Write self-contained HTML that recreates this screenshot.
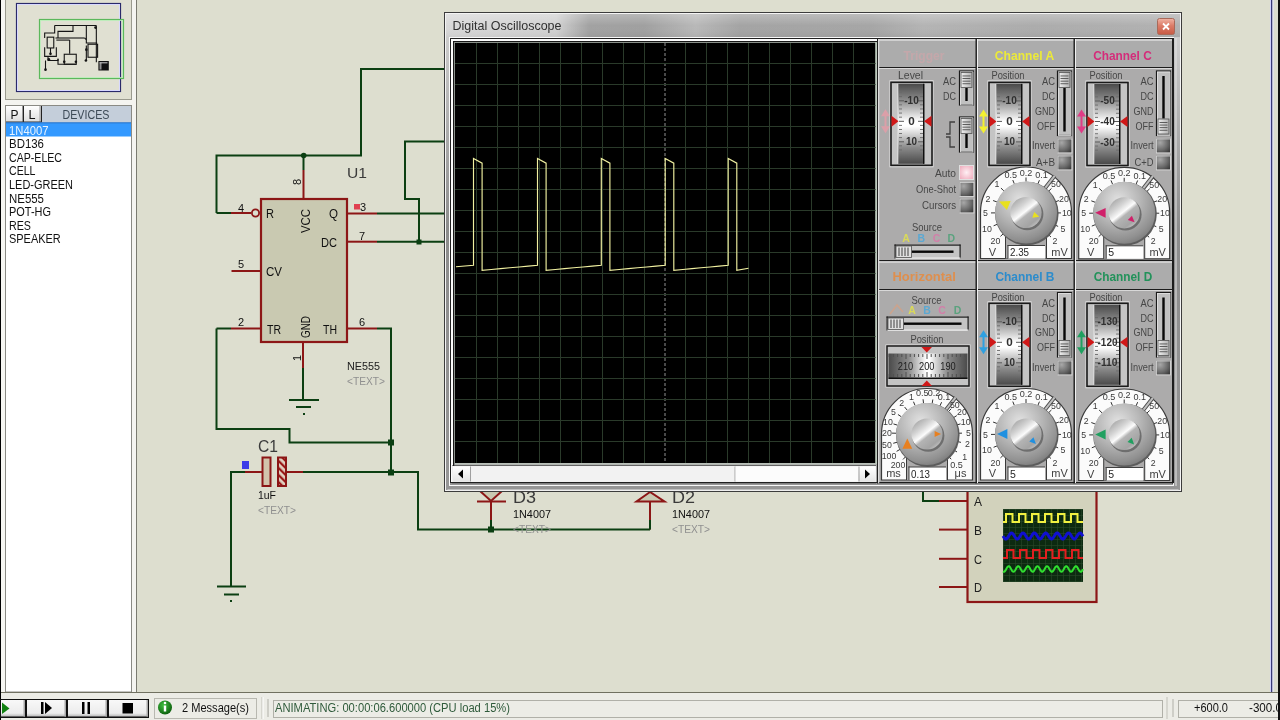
<!DOCTYPE html>
<html><head><meta charset="utf-8"><title>Proteus</title>
<style>html,body{margin:0;padding:0;overflow:hidden;background:#dddecf;}
svg{display:block;} text{font-family:"Liberation Sans", sans-serif;}</style></head>
<body><svg width="1280" height="720" viewBox="0 0 1280 720"><g style="filter:blur(0)">
<defs><linearGradient id="tbv" x1="0" y1="0" x2="0" y2="1"><stop offset="0" stop-color="#fff" stop-opacity="0.25"/><stop offset="0.5" stop-color="#fff" stop-opacity="0"/><stop offset="1" stop-color="#000" stop-opacity="0.05"/></linearGradient></defs>
<rect x="0" y="0" width="1280" height="720" fill="#dddecf" />
<rect x="0" y="0" width="137" height="692" fill="#e4e4d8" />
<rect x="0" y="0" width="1" height="720" fill="#000" />
<rect x="1" y="0" width="4" height="720" fill="#f6f6f2" />
<rect x="5.5" y="-1" width="126" height="100.5" fill="#e0e0d2" stroke="#9a9a8e" stroke-width="1" />
<rect x="132" y="0" width="4" height="692" fill="#f4f4f0" />
<rect x="136" y="0" width="1" height="692" fill="#7a7a70" />
<rect x="5" y="100" width="127" height="5" fill="#f4f4f0" />
<rect x="16.5" y="3.5" width="104" height="88" fill="none" stroke="#2a2a6a" stroke-width="1.2" />
<rect x="17.5" y="4.5" width="102" height="86" fill="none" stroke="#d8d8ff" stroke-width="1" />
<rect x="39.5" y="19.5" width="84" height="59" fill="none" stroke="#5cb85c" stroke-width="1.2" />
<rect x="40.5" y="20.5" width="82" height="57" fill="none" stroke="#b8f0b8" stroke-width="0.8" />
<polyline points="54.66666666666667,25.5 96.33333333333334,25.5" stroke="#141414" stroke-width="1.1" fill="none" />
<polyline points="54.66666666666667,25.5 54.66666666666667,33.0 44.666666666666664,33.0 44.666666666666664,38.0" stroke="#141414" stroke-width="1.1" fill="none" />
<polyline points="73.0,25.5 73.0,31.333333333333336 58.0,31.333333333333336 58.0,38.0" stroke="#141414" stroke-width="1.1" fill="none" />
<polyline points="55.5,38.0 84.66666666666666,38.0" stroke="#141414" stroke-width="1.1" fill="none" />
<polyline points="86.33333333333334,25.5 86.33333333333334,43.0 97.16666666666666,43.0" stroke="#141414" stroke-width="1.1" fill="none" />
<polyline points="96.33333333333334,25.5 96.33333333333334,62.166666666666664" stroke="#141414" stroke-width="1.1" fill="none" />
<polyline points="86.33333333333334,45.5 86.33333333333334,60.5" stroke="#141414" stroke-width="1.1" fill="none" />
<polyline points="69.66666666666667,40.08333333333333 69.66666666666667,53.833333333333336" stroke="#141414" stroke-width="1.1" fill="none" />
<polyline points="56.33333333333333,40.08333333333333 69.66666666666667,40.08333333333333" stroke="#141414" stroke-width="1.1" fill="none" />
<polyline points="58.0,58.833333333333336 58.0,64.25 76.33333333333334,64.25" stroke="#141414" stroke-width="1.1" fill="none" />
<polyline points="44.666666666666664,47.16666666666667 44.666666666666664,56.333333333333336 56.33333333333333,56.333333333333336 56.33333333333333,47.16666666666667" stroke="#141414" stroke-width="1.1" fill="none" />
<polyline points="48.0,56.333333333333336 48.0,60.5 58.0,60.5 58.0,58.833333333333336" stroke="#141414" stroke-width="1.1" fill="none" />
<polyline points="45.5,60.5 45.5,69.66666666666666" stroke="#141414" stroke-width="1.1" fill="none" />
<polyline points="84.66666666666666,38.0 86.33333333333334,39.66666666666667" stroke="#141414" stroke-width="1.1" fill="none" />
<polyline points="50.5,48.0 50.5,53.833333333333336" stroke="#141414" stroke-width="1.1" fill="none" />
<rect x="47.166666666666664" y="37.16666666666667" width="6.6" height="10.8" fill="none" stroke="#141414" stroke-width="1.1" />
<rect x="88.0" y="44.25" width="9.6" height="13" fill="none" stroke="#141414" stroke-width="1.1" />
<rect x="64.25" y="54.25" width="12" height="10" fill="none" stroke="#141414" stroke-width="1.1" />
<circle cx="45.5" cy="69.66666666666666" r="1.3" fill="#141414"/>
<circle cx="85.91666666666666" cy="60.5" r="1.3" fill="#141414"/>
<circle cx="64.25" cy="61.75" r="1.3" fill="#141414"/>
<circle cx="75.91666666666666" cy="61.75" r="1.3" fill="#141414"/>
<circle cx="95.5" cy="27.583333333333336" r="1.3" fill="#141414"/>
<circle cx="50.5" cy="53.833333333333336" r="1.3" fill="#141414"/>
<circle cx="48.833333333333336" cy="59.25" r="1.3" fill="#141414"/>
<circle cx="86.33333333333334" cy="49.66666666666667" r="1.3" fill="#141414"/>
<rect x="98.4" y="61" width="10.4" height="9.5" fill="#101010" />
<rect x="99.5" y="62.5" width="2" height="7" fill="#909090" />
<rect x="99.5" y="62.3" width="8" height="1" fill="#d0d0d0" />
<rect x="5.5" y="105.5" width="126" height="586.5" fill="#ffffff" stroke="#8a8a84" stroke-width="1" />
<rect x="42" y="106" width="89" height="16" fill="#c4ceda" />
<linearGradient id="btn6" x1="0" y1="0" x2="0" y2="1"><stop offset="0" stop-color="#ffffff"/><stop offset="1" stop-color="#dcdcdc"/></linearGradient>
<rect x="6" y="106" width="17" height="16" fill="url(#btn6)" />
<rect x="22" y="106" width="1.2" height="16" fill="#9a9a9a" />
<linearGradient id="btn23" x1="0" y1="0" x2="0" y2="1"><stop offset="0" stop-color="#ffffff"/><stop offset="1" stop-color="#dcdcdc"/></linearGradient>
<rect x="23.5" y="106" width="17" height="16" fill="url(#btn23)" />
<rect x="39.5" y="106" width="1.2" height="16" fill="#9a9a9a" />
<rect x="23" y="106" width="1" height="16" fill="#222" />
<rect x="41" y="106" width="1" height="16" fill="#222" />
<rect x="6" y="121.5" width="36" height="1.2" fill="#333" />
<text x="10.5" y="119" font-size="13" fill="#111" text-anchor="start" font-weight="normal" textLength="8" lengthAdjust="spacingAndGlyphs" >P</text>
<text x="28.5" y="119" font-size="13" fill="#111" text-anchor="start" font-weight="normal" textLength="7" lengthAdjust="spacingAndGlyphs" >L</text>
<text x="62.5" y="118.5" font-size="12" fill="#3c4a56" text-anchor="start" font-weight="normal" textLength="47" lengthAdjust="spacingAndGlyphs" >DEVICES</text>
<rect x="6" y="122.5" width="125" height="14" fill="#3399ff" />
<rect x="6" y="122.3" width="125" height="1" fill="#2a70c0" />
<text x="9" y="134.5" font-size="12" fill="#e8f4ff" text-anchor="start" font-weight="normal" textLength="39.5" lengthAdjust="spacingAndGlyphs" >1N4007</text>
<text x="9" y="148.1" font-size="12" fill="#111" text-anchor="start" font-weight="normal" textLength="35" lengthAdjust="spacingAndGlyphs" >BD136</text>
<text x="9" y="161.7" font-size="12" fill="#111" text-anchor="start" font-weight="normal" textLength="53" lengthAdjust="spacingAndGlyphs" >CAP-ELEC</text>
<text x="9" y="175.3" font-size="12" fill="#111" text-anchor="start" font-weight="normal" textLength="26.5" lengthAdjust="spacingAndGlyphs" >CELL</text>
<text x="9" y="188.9" font-size="12" fill="#111" text-anchor="start" font-weight="normal" textLength="64" lengthAdjust="spacingAndGlyphs" >LED-GREEN</text>
<text x="9" y="202.5" font-size="12" fill="#111" text-anchor="start" font-weight="normal" textLength="35" lengthAdjust="spacingAndGlyphs" >NE555</text>
<text x="9" y="216.1" font-size="12" fill="#111" text-anchor="start" font-weight="normal" textLength="42" lengthAdjust="spacingAndGlyphs" >POT-HG</text>
<text x="9" y="229.7" font-size="12" fill="#111" text-anchor="start" font-weight="normal" textLength="22" lengthAdjust="spacingAndGlyphs" >RES</text>
<text x="9" y="243.3" font-size="12" fill="#111" text-anchor="start" font-weight="normal" textLength="51.7" lengthAdjust="spacingAndGlyphs" >SPEAKER</text>
<rect x="0" y="692" width="1280" height="28" fill="#ecece6" />
<rect x="0" y="692" width="1280" height="1" fill="#707060" />
<rect x="0" y="0" width="1" height="720" fill="#000" />
<rect x="0" y="699" width="149" height="19" fill="#101010" />
<linearGradient id="pb0" x1="0" y1="0" x2="0" y2="1"><stop offset="0" stop-color="#f8f8f8"/><stop offset="0.8" stop-color="#ececec"/><stop offset="1" stop-color="#b8b8b8"/></linearGradient>
<rect x="1" y="700" width="24" height="16.5" fill="url(#pb0)" />
<rect x="23.5" y="700" width="1.5" height="16.5" fill="#a8a8a8" />
<linearGradient id="pb26" x1="0" y1="0" x2="0" y2="1"><stop offset="0" stop-color="#f8f8f8"/><stop offset="0.8" stop-color="#ececec"/><stop offset="1" stop-color="#b8b8b8"/></linearGradient>
<rect x="27" y="700" width="39" height="16.5" fill="url(#pb26)" />
<rect x="64.5" y="700" width="1.5" height="16.5" fill="#a8a8a8" />
<linearGradient id="pb67" x1="0" y1="0" x2="0" y2="1"><stop offset="0" stop-color="#f8f8f8"/><stop offset="0.8" stop-color="#ececec"/><stop offset="1" stop-color="#b8b8b8"/></linearGradient>
<rect x="68" y="700" width="39" height="16.5" fill="url(#pb67)" />
<rect x="105.5" y="700" width="1.5" height="16.5" fill="#a8a8a8" />
<linearGradient id="pb108" x1="0" y1="0" x2="0" y2="1"><stop offset="0" stop-color="#f8f8f8"/><stop offset="0.8" stop-color="#ececec"/><stop offset="1" stop-color="#b8b8b8"/></linearGradient>
<rect x="109" y="700" width="39" height="16.5" fill="url(#pb108)" />
<rect x="146.5" y="700" width="1.5" height="16.5" fill="#a8a8a8" />
<polygon points="2,702.5 9.5,708.5 2,714" fill="#108010"/>
<rect x="41" y="702" width="2.5" height="12" fill="#000" />
<polygon points="45,702 52,708 45,714" fill="#000"/>
<rect x="82" y="702" width="2.5" height="12" fill="#000" />
<rect x="87.5" y="702" width="2.5" height="12" fill="#000" />
<rect x="122.5" y="703" width="10.5" height="10.5" fill="#000" />
<rect x="154.5" y="698.5" width="102" height="20" fill="none" stroke="#b8b8b0" stroke-width="1" />
<radialGradient id="info" cx="0.4" cy="0.35" r="0.7"><stop offset="0" stop-color="#40c040"/><stop offset="1" stop-color="#0a5a0a"/></radialGradient>
<circle cx="165" cy="707.5" r="7" fill="url(#info)"/>
<rect x="163.8" y="705.5" width="2.4" height="6" fill="#fff" />
<circle cx="165" cy="703" r="1.3" fill="#fff"/>
<text x="182" y="712" font-size="12" fill="#111" text-anchor="start" font-weight="normal" textLength="67" lengthAdjust="spacingAndGlyphs" >2 Message(s)</text>
<rect x="261.5" y="697" width="1" height="22" fill="#c0c0b8" />
<rect x="262.5" y="697" width="1" height="22" fill="#ffffff" />
<rect x="267.5" y="699" width="1" height="18" fill="#b0b0a8" />
<rect x="273.5" y="700.5" width="889" height="17" fill="none" stroke="#b0b0a8" stroke-width="1" />
<text x="275" y="712" font-size="12" fill="#2e5a3a" text-anchor="start" font-weight="normal" textLength="235" lengthAdjust="spacingAndGlyphs" >ANIMATING: 00:00:06.600000 (CPU load 15%)</text>
<rect x="1166.5" y="697" width="1" height="22" fill="#c0c0b8" />
<rect x="1172.5" y="699" width="1" height="18" fill="#b0b0a8" />
<rect x="1178.5" y="700.5" width="110" height="17" fill="none" stroke="#b0b0a8" stroke-width="1" />
<text x="1194" y="712" font-size="12" fill="#111" text-anchor="start" font-weight="normal" textLength="34" lengthAdjust="spacingAndGlyphs" >+600.0</text>
<text x="1249" y="712" font-size="12" fill="#111" text-anchor="start" font-weight="normal" textLength="33" lengthAdjust="spacingAndGlyphs" >-300.0</text>
<rect x="1278" y="0" width="2" height="720" fill="#101010" />
<rect x="1270" y="0" width="1" height="692" fill="#d0d0f8" />
<rect x="1271" y="0" width="1.5" height="692" fill="#3a3a78" />
<rect x="1272.5" y="0" width="1" height="692" fill="#e8e8ff" />
<polyline points="216.5,213 216.5,155.5 361,155.5 361,69 445,69" stroke="#0b3f12" stroke-width="2" fill="none" />
<polyline points="303.5,155.5 303.5,170" stroke="#0b3f12" stroke-width="2" fill="none" />
<polyline points="445,141.5 405,141.5 405,199 419,199 419,242" stroke="#0b3f12" stroke-width="2" fill="none" />
<polyline points="216.5,213 231,213" stroke="#0b3f12" stroke-width="2" fill="none" />
<polyline points="377,213.5 445,213.5" stroke="#0b3f12" stroke-width="2" fill="none" />
<polyline points="377,241.7 445,241.7" stroke="#0b3f12" stroke-width="2" fill="none" />
<circle cx="303.7" cy="155.5" r="2.8" fill="#0b3f12"/>
<rect x="416.5" y="239.5" width="5" height="5" fill="#0b3f12" />
<rect x="261" y="199" width="86" height="143" fill="#c9c9b1" stroke="#8c1616" stroke-width="2.2" />
<polyline points="303.5,170 303.5,199" stroke="#8c1616" stroke-width="2" fill="none" />
<polyline points="231,213 251,213" stroke="#8c1616" stroke-width="2" fill="none" />
<circle cx="255.5" cy="213" r="3.6" fill="none" stroke="#8c1616" stroke-width="1.8"/>
<polyline points="347,213.5 377,213.5" stroke="#8c1616" stroke-width="2" fill="none" />
<polyline points="347,241.7 377,241.7" stroke="#8c1616" stroke-width="2" fill="none" />
<polyline points="231.5,271 261,271" stroke="#8c1616" stroke-width="2" fill="none" />
<polyline points="231,328.5 261,328.5" stroke="#8c1616" stroke-width="2" fill="none" />
<polyline points="347,328.5 377,328.5" stroke="#8c1616" stroke-width="2" fill="none" />
<polyline points="303,342 303,368" stroke="#8c1616" stroke-width="2" fill="none" />
<rect x="354" y="204" width="6" height="5.5" fill="#e04050" />
<polyline points="216.5,328.5 231,328.5" stroke="#0b3f12" stroke-width="2" fill="none" />
<polyline points="216.5,328.5 216.5,429 289.5,429 289.5,442.5 391,442.5" stroke="#0b3f12" stroke-width="2" fill="none" />
<polyline points="377,328.5 391,328.5 391,472.5" stroke="#0b3f12" stroke-width="2" fill="none" />
<polyline points="303,368 303,400" stroke="#0b3f12" stroke-width="2" fill="none" />
<polyline points="289,400 319,400" stroke="#0b3f12" stroke-width="2" fill="none" />
<polyline points="296,407 311,407" stroke="#0b3f12" stroke-width="2" fill="none" />
<rect x="303" y="413" width="2" height="2" fill="#0b3f12" />
<rect x="388" y="439.5" width="6" height="6" fill="#0b3f12" />
<rect x="388" y="469.5" width="6" height="6" fill="#0b3f12" />
<polyline points="231,586 231,472 245,472" stroke="#0b3f12" stroke-width="2" fill="none" />
<polyline points="245,472 262,472" stroke="#8c1616" stroke-width="2" fill="none" />
<polyline points="286,472 303,472" stroke="#8c1616" stroke-width="2" fill="none" />
<polyline points="303,472 418,472 418,529.5 650,529.5" stroke="#0b3f12" stroke-width="2" fill="none" />
<rect x="262.5" y="457.5" width="8" height="28.5" fill="#d2c4ac" stroke="#8c1616" stroke-width="2" />
<pattern id="hatch" width="5" height="5" patternUnits="userSpaceOnUse" patternTransform="rotate(-45)"><rect width="5" height="5" fill="#e0d0c0"/><rect width="2.2" height="5" fill="#9a1818"/></pattern>
<rect x="278" y="457.5" width="8" height="28.5" fill="url(#hatch)" stroke="#8c1616" stroke-width="2" />
<rect x="242" y="461" width="7" height="8" fill="#3c3ce8" />
<polyline points="217,586.5 246,586.5" stroke="#0b3f12" stroke-width="2" fill="none" />
<polyline points="224,594.5 239,594.5" stroke="#0b3f12" stroke-width="2" fill="none" />
<rect x="230" y="600" width="2" height="2" fill="#0b3f12" />
<polyline points="491,501 491,520" stroke="#8c1616" stroke-width="2" fill="none" />
<polyline points="491,520 491,529.5" stroke="#0b3f12" stroke-width="2" fill="none" />
<polyline points="477,501.5 506,501.5" stroke="#8c1616" stroke-width="2" fill="none" />
<polygon points="480,491 502,491 491,501" fill="#c9c9b1" stroke="#8c1616" stroke-width="2"/>
<rect x="488" y="526.5" width="6" height="6" fill="#0b3f12" />
<polyline points="650,501 650,529.5" stroke="#8c1616" stroke-width="2" fill="none" />
<polygon points="650,492 636.5,501.5 664.5,501.5" fill="#c9c9b1" stroke="#8c1616" stroke-width="2"/>
<polyline points="650,520 650,529.5" stroke="#0b3f12" stroke-width="2" fill="none" />
<polyline points="923,492 923,501 939,501" stroke="#0b3f12" stroke-width="2" fill="none" />
<polyline points="939,501 967,501" stroke="#8c1616" stroke-width="2" fill="none" />
<polyline points="939,529.6 967,529.6" stroke="#8c1616" stroke-width="2" fill="none" />
<polyline points="939,558.8 967,558.8" stroke="#8c1616" stroke-width="2" fill="none" />
<polyline points="939,587 967,587" stroke="#8c1616" stroke-width="2" fill="none" />
<rect x="967.5" y="486" width="129" height="116" fill="#d2d2bc" stroke="#8c1616" stroke-width="2.2" />
<text x="974" y="505.5" font-size="12" fill="#202020" text-anchor="start" font-weight="normal" textLength="8" lengthAdjust="spacingAndGlyphs" >A</text>
<text x="974" y="534.5" font-size="12" fill="#202020" text-anchor="start" font-weight="normal" textLength="8" lengthAdjust="spacingAndGlyphs" >B</text>
<text x="974" y="563.5" font-size="12" fill="#202020" text-anchor="start" font-weight="normal" textLength="8" lengthAdjust="spacingAndGlyphs" >C</text>
<text x="974" y="592" font-size="12" fill="#202020" text-anchor="start" font-weight="normal" textLength="8" lengthAdjust="spacingAndGlyphs" >D</text>
<rect x="1003" y="509" width="80" height="73" fill="#0c2a10" />
<rect x="1003" y="509" width="0.6" height="73" fill="#2a4a2a" />
<rect x="1009" y="509" width="0.6" height="73" fill="#2a4a2a" />
<rect x="1015" y="509" width="0.6" height="73" fill="#2a4a2a" />
<rect x="1021" y="509" width="0.6" height="73" fill="#2a4a2a" />
<rect x="1027" y="509" width="0.6" height="73" fill="#2a4a2a" />
<rect x="1033" y="509" width="0.6" height="73" fill="#2a4a2a" />
<rect x="1039" y="509" width="0.6" height="73" fill="#2a4a2a" />
<rect x="1045" y="509" width="0.6" height="73" fill="#2a4a2a" />
<rect x="1051" y="509" width="0.6" height="73" fill="#2a4a2a" />
<rect x="1057" y="509" width="0.6" height="73" fill="#2a4a2a" />
<rect x="1063" y="509" width="0.6" height="73" fill="#2a4a2a" />
<rect x="1069" y="509" width="0.6" height="73" fill="#2a4a2a" />
<rect x="1075" y="509" width="0.6" height="73" fill="#2a4a2a" />
<rect x="1081" y="509" width="0.6" height="73" fill="#2a4a2a" />
<rect x="1003" y="509" width="80" height="0.6" fill="#2a4a2a" />
<rect x="1003" y="515" width="80" height="0.6" fill="#2a4a2a" />
<rect x="1003" y="521" width="80" height="0.6" fill="#2a4a2a" />
<rect x="1003" y="527" width="80" height="0.6" fill="#2a4a2a" />
<rect x="1003" y="533" width="80" height="0.6" fill="#2a4a2a" />
<rect x="1003" y="539" width="80" height="0.6" fill="#2a4a2a" />
<rect x="1003" y="545" width="80" height="0.6" fill="#2a4a2a" />
<rect x="1003" y="551" width="80" height="0.6" fill="#2a4a2a" />
<rect x="1003" y="557" width="80" height="0.6" fill="#2a4a2a" />
<rect x="1003" y="563" width="80" height="0.6" fill="#2a4a2a" />
<rect x="1003" y="569" width="80" height="0.6" fill="#2a4a2a" />
<rect x="1003" y="575" width="80" height="0.6" fill="#2a4a2a" />
<rect x="1003" y="581" width="80" height="0.6" fill="#2a4a2a" />
<polyline points="1003,522 1006,522 1006,514 1012.5,514 1012.5,522 1019,522 1019,514 1025.5,514 1025.5,522 1032,522 1032,514 1038.5,514 1038.5,522 1045,522 1045,514 1051.5,514 1051.5,522 1058,522 1058,514 1064.5,514 1064.5,522 1071,522 1071,514 1077.5,514 1077.5,522 1083,522" stroke="#f0f040" stroke-width="2" fill="none" />
<polyline points="1003,558 1007,558 1007,550 1013.5,550 1013.5,558 1020,558 1020,550 1026.5,550 1026.5,558 1033,558 1033,550 1039.5,550 1039.5,558 1046,558 1046,550 1052.5,550 1052.5,558 1059,558 1059,550 1065.5,550 1065.5,558 1072,558 1072,550 1078.5,550 1078.5,558 1083,558" stroke="#e02020" stroke-width="2" fill="none" />
<polyline points="1003.0,536.0 1003.5,536.816310394536 1004.0,537.5710187419636 1004.5,538.2071717320194 1005.0,538.6767627158551 1005.5,538.9443544797573 1006.0,538.98975347902 1006.5,538.8095337235911 1007.0,538.417295316983 1007.5,537.842638138069 1008.0,537.1289281158435 1008.5,536.3300246629823 1009.0,535.5062162291578 1009.5,534.7196706935108 1010.0,534.0297439278568 1010.5,533.4885005652125 1011.0,533.1367849943615 1011.5,533.0011390789251 1012.0,533.091799202182 1012.5,533.4019237886466 1013.0,533.908109596718 1013.5,534.5721578208888 1014.0,535.3439567263808 1014.5,536.1652632810676 1015.0,536.9740984076141 1015.5,537.7094241725308 1016.0,538.315749952749 1016.5,538.7473199799651 1017.0,538.9715662539126 1017.5,538.9715662539126 1018.0,538.7473199799651 1018.5,538.315749952749 1019.0,537.7094241725308 1019.5,536.9740984076141 1020.0,536.1652632810676 1020.5,535.3439567263808 1021.0,534.5721578208888 1021.5,533.908109596718 1022.0,533.4019237886467 1022.5,533.091799202182 1023.0,533.0011390789251 1023.5,533.1367849943615 1024.0,533.4885005652125 1024.5,534.0297439278568 1025.0,534.7196706935108 1025.5,535.5062162291578 1026.0,536.3300246629823 1026.5,537.1289281158435 1027.0,537.842638138069 1027.5,538.417295316983 1028.0,538.8095337235911 1028.5,538.98975347902 1029.0,538.9443544797573 1029.5,538.6767627158551 1030.0,538.2071717320194 1030.5,537.5710187419636 1031.0,536.816310394536 1031.5,536.0 1032.0,535.183689605464 1032.5,534.4289812580364 1033.0,533.7928282679807 1033.5,533.3232372841449 1034.0,533.0556455202427 1034.5,533.01024652098 1035.0,533.1904662764089 1035.5,533.582704683017 1036.0,534.157361861931 1036.5,534.8710718841564 1037.0,535.6699753370177 1037.5,536.4937837708422 1038.0,537.2803293064892 1038.5,537.9702560721432 1039.0,538.5114994347875 1039.5,538.8632150056385 1040.0,538.9988609210749 1040.5,538.908200797818 1041.0,538.5980762113534 1041.5,538.091890403282 1042.0,537.4278421791112 1042.5,536.6560432736192 1043.0,535.8347367189324 1043.5,535.0259015923859 1044.0,534.2905758274692 1044.5,533.684250047251 1045.0,533.2526800200349 1045.5,533.0284337460874 1046.0,533.0284337460874 1046.5,533.2526800200349 1047.0,533.684250047251 1047.5,534.2905758274692 1048.0,535.0259015923859 1048.5,535.8347367189324 1049.0,536.6560432736192 1049.5,537.4278421791112 1050.0,538.091890403282 1050.5,538.5980762113534 1051.0,538.908200797818 1051.5,538.9988609210749 1052.0,538.8632150056385 1052.5,538.5114994347875 1053.0,537.9702560721432 1053.5,537.2803293064892 1054.0,536.4937837708422 1054.5,535.6699753370177 1055.0,534.8710718841565 1055.5,534.157361861931 1056.0,533.582704683017 1056.5,533.1904662764089 1057.0,533.01024652098 1057.5,533.0556455202427 1058.0,533.3232372841449 1058.5,533.7928282679806 1059.0,534.4289812580364 1059.5,535.183689605464 1060.0,536.0 1060.5,536.816310394536 1061.0,537.5710187419636 1061.5,538.2071717320194 1062.0,538.6767627158551 1062.5,538.9443544797573 1063.0,538.98975347902 1063.5,538.8095337235911 1064.0,538.417295316983 1064.5,537.842638138069 1065.0,537.1289281158436 1065.5,536.3300246629823 1066.0,535.5062162291578 1066.5,534.7196706935108 1067.0,534.0297439278568 1067.5,533.4885005652125 1068.0,533.1367849943615 1068.5,533.0011390789251 1069.0,533.091799202182 1069.5,533.4019237886466 1070.0,533.908109596718 1070.5,534.5721578208887 1071.0,535.3439567263808 1071.5,536.1652632810676 1072.0,536.9740984076141 1072.5,537.7094241725308 1073.0,538.315749952749 1073.5,538.7473199799651 1074.0,538.9715662539126 1074.5,538.9715662539126 1075.0,538.7473199799651 1075.5,538.315749952749 1076.0,537.7094241725308 1076.5,536.9740984076141 1077.0,536.1652632810676 1077.5,535.3439567263808 1078.0,534.5721578208888 1078.5,533.9081095967181 1079.0,533.4019237886467 1079.5,533.091799202182 1080.0,533.0011390789251 1080.5,533.1367849943615 1081.0,533.4885005652125 1081.5,534.0297439278568 1082.0,534.7196706935108 1082.5,535.5062162291578 1083.0,536.3300246629823" stroke="#1010d0" stroke-width="3" fill="none" />
<polyline points="1003.0,571.3561187574621 1003.5,571.7173683961504 1004.0,571.790197257043 1004.5,571.5668753037069 1005.0,571.0711058704309 1005.5,570.3555097964635 1006.0,569.4960402637632 1006.5,568.5839211459368 1007.0,567.7159645299201 1007.5,566.9842951061453 1008.0,566.4665720777563 1008.5,566.2177464329011 1009.0,566.2642284610814 1009.5,566.6010845718646 1010.0,567.1925609448944 1010.5,567.975878431124 1011.0,568.8678959154367 1011.5,569.7739348930713 1012.0,570.5978286215968 1012.5,571.2521292340481 1013.0,571.6673894328769 1013.5,571.799533608128 1014.0,571.634536011264 1014.5,571.1899094444835 1015.0,570.5128464564308 1015.5,569.6752103373049 1016.0,568.7659075678503 1016.5,567.8814513085164 1017.0,567.1157175176033 1017.5,566.5499809813613 1018.0,566.2442888292265 1018.5,566.2310871470555 1019.0,566.5117771579746 1019.5,567.0565664969209 1020.0,567.8076313645539 1020.5,568.6852539303412 1021.0,569.596283562446 1021.5,570.4440238116644 1022.0,571.1384957475008 1022.5,571.6059882985468 1023.0,571.7968819265107 1023.5,571.6909152311596 1024.0,571.299335490094 1024.5,570.6637048756152 1025.0,569.8514890565219 1025.5,568.9488964094967 1026.0,568.0517278843322 1026.5,567.2552087159314 1027.0,566.6438812425379 1027.5,566.2826316038496 1028.0,566.209802742957 1028.5,566.4331246962931 1029.0,566.9288941295691 1029.5,567.6444902035365 1030.0,568.5039597362368 1030.5,569.4160788540632 1031.0,570.2840354700799 1031.5,571.0157048938547 1032.0,571.5334279222437 1032.5,571.7822535670989 1033.0,571.7357715389186 1033.5,571.3989154281354 1034.0,570.8074390551056 1034.5,570.024121568876 1035.0,569.1321040845633 1035.5,568.2260651069287 1036.0,567.4021713784032 1036.5,566.7478707659519 1037.0,566.3326105671231 1037.5,566.200466391872 1038.0,566.365463988736 1038.5,566.8100905555164 1039.0,567.4871535435692 1039.5,568.3247896626951 1040.0,569.2340924321497 1040.5,570.1185486914836 1041.0,570.8842824823967 1041.5,571.4500190186387 1042.0,571.7557111707735 1042.5,571.7689128529445 1043.0,571.4882228420254 1043.5,570.9434335030791 1044.0,570.1923686354461 1044.5,569.3147460696588 1045.0,568.403716437554 1045.5,567.5559761883356 1046.0,566.8615042524992 1046.5,566.3940117014532 1047.0,566.2031180734893 1047.5,566.3090847688404 1048.0,566.700664509906 1048.5,567.3362951243848 1049.0,568.1485109434781 1049.5,569.0511035905033 1050.0,569.9482721156678 1050.5,570.7447912840686 1051.0,571.3561187574621 1051.5,571.7173683961504 1052.0,571.790197257043 1052.5,571.5668753037069 1053.0,571.0711058704309 1053.5,570.3555097964635 1054.0,569.4960402637632 1054.5,568.5839211459368 1055.0,567.7159645299201 1055.5,566.9842951061453 1056.0,566.4665720777563 1056.5,566.2177464329011 1057.0,566.2642284610814 1057.5,566.6010845718646 1058.0,567.1925609448944 1058.5,567.975878431124 1059.0,568.8678959154367 1059.5,569.7739348930713 1060.0,570.5978286215968 1060.5,571.2521292340481 1061.0,571.6673894328769 1061.5,571.799533608128 1062.0,571.634536011264 1062.5,571.1899094444835 1063.0,570.5128464564308 1063.5,569.6752103373049 1064.0,568.7659075678503 1064.5,567.8814513085164 1065.0,567.1157175176033 1065.5,566.5499809813613 1066.0,566.2442888292265 1066.5,566.2310871470555 1067.0,566.5117771579746 1067.5,567.0565664969209 1068.0,567.8076313645539 1068.5,568.6852539303412 1069.0,569.596283562446 1069.5,570.4440238116645 1070.0,571.1384957475008 1070.5,571.6059882985468 1071.0,571.7968819265107 1071.5,571.6909152311596 1072.0,571.299335490094 1072.5,570.6637048756152 1073.0,569.8514890565219 1073.5,568.9488964094967 1074.0,568.0517278843322 1074.5,567.2552087159314 1075.0,566.6438812425379 1075.5,566.2826316038496 1076.0,566.209802742957 1076.5,566.4331246962931 1077.0,566.9288941295691 1077.5,567.6444902035365 1078.0,568.5039597362368 1078.5,569.4160788540632 1079.0,570.2840354700799 1079.5,571.0157048938547 1080.0,571.5334279222437 1080.5,571.7822535670989 1081.0,571.7357715389186 1081.5,571.3989154281354 1082.0,570.8074390551056 1082.5,570.024121568876 1083.0,569.1321040845633" stroke="#30e030" stroke-width="2" fill="none" />
<text x="347" y="178" font-size="15" fill="#3a3a3a" text-anchor="start" font-weight="normal" textLength="20" lengthAdjust="spacingAndGlyphs" >U1</text>
<text x="238" y="212" font-size="11" fill="#111" text-anchor="start" font-weight="normal" >4</text>
<text x="238" y="268" font-size="11" fill="#111" text-anchor="start" font-weight="normal" >5</text>
<text x="238" y="326" font-size="11" fill="#111" text-anchor="start" font-weight="normal" >2</text>
<text x="360" y="211" font-size="11" fill="#111" text-anchor="start" font-weight="normal" >3</text>
<text x="359" y="240" font-size="11" fill="#111" text-anchor="start" font-weight="normal" >7</text>
<text x="359" y="326" font-size="11" fill="#111" text-anchor="start" font-weight="normal" >6</text>
<text x="301" y="185" font-size="11" fill="#111" text-anchor="start" font-weight="normal" transform="rotate(-90 301 185)" text-anchor="middle">8</text>
<text x="301" y="361" font-size="11" fill="#111" text-anchor="start" font-weight="normal" transform="rotate(-90 301 361)">1</text>
<text x="266" y="218" font-size="12" fill="#111" text-anchor="start" font-weight="normal" textLength="8" lengthAdjust="spacingAndGlyphs" >R</text>
<text x="329" y="218" font-size="12" fill="#111" text-anchor="start" font-weight="normal" textLength="9" lengthAdjust="spacingAndGlyphs" >Q</text>
<text x="321" y="247" font-size="12" fill="#111" text-anchor="start" font-weight="normal" textLength="16" lengthAdjust="spacingAndGlyphs" >DC</text>
<text x="266" y="276" font-size="12" fill="#111" text-anchor="start" font-weight="normal" textLength="16" lengthAdjust="spacingAndGlyphs" >CV</text>
<text x="267" y="334" font-size="12" fill="#111" text-anchor="start" font-weight="normal" textLength="14" lengthAdjust="spacingAndGlyphs" >TR</text>
<text x="323" y="334" font-size="12" fill="#111" text-anchor="start" font-weight="normal" textLength="14" lengthAdjust="spacingAndGlyphs" >TH</text>
<text x="0" y="0" font-size="12" fill="#111" textLength="24" lengthAdjust="spacingAndGlyphs" transform="translate(309.5 233) rotate(-90)">VCC</text>
<text x="0" y="0" font-size="12" fill="#111" textLength="22" lengthAdjust="spacingAndGlyphs" transform="translate(309.5 338) rotate(-90)">GND</text>
<text x="347" y="370" font-size="11" fill="#202020" text-anchor="start" font-weight="normal" textLength="33" lengthAdjust="spacingAndGlyphs" >NE555</text>
<text x="347" y="385" font-size="11" fill="#909090" text-anchor="start" font-weight="normal" textLength="38" lengthAdjust="spacingAndGlyphs" >&lt;TEXT&gt;</text>
<text x="258" y="452" font-size="16" fill="#3a3a3a" text-anchor="start" font-weight="normal" textLength="20" lengthAdjust="spacingAndGlyphs" >C1</text>
<text x="258" y="499" font-size="11" fill="#111" text-anchor="start" font-weight="normal" textLength="18" lengthAdjust="spacingAndGlyphs" >1uF</text>
<text x="258" y="514" font-size="11" fill="#909090" text-anchor="start" font-weight="normal" textLength="38" lengthAdjust="spacingAndGlyphs" >&lt;TEXT&gt;</text>
<text x="513" y="503" font-size="16" fill="#3a3a3a" text-anchor="start" font-weight="normal" textLength="23" lengthAdjust="spacingAndGlyphs" >D3</text>
<text x="513" y="518" font-size="11" fill="#111" text-anchor="start" font-weight="normal" textLength="38" lengthAdjust="spacingAndGlyphs" >1N4007</text>
<text x="513" y="533" font-size="11" fill="#909090" text-anchor="start" font-weight="normal" textLength="38" lengthAdjust="spacingAndGlyphs" >&lt;TEXT&gt;</text>
<text x="672" y="503" font-size="16" fill="#3a3a3a" text-anchor="start" font-weight="normal" textLength="23" lengthAdjust="spacingAndGlyphs" >D2</text>
<text x="672" y="518" font-size="11" fill="#111" text-anchor="start" font-weight="normal" textLength="38" lengthAdjust="spacingAndGlyphs" >1N4007</text>
<text x="672" y="533" font-size="11" fill="#909090" text-anchor="start" font-weight="normal" textLength="38" lengthAdjust="spacingAndGlyphs" >&lt;TEXT&gt;</text>
<linearGradient id="wfg" x1="0" y1="0" x2="0" y2="1"><stop offset="0" stop-color="#d4d4d4"/><stop offset="0.08" stop-color="#c8c8c8"/><stop offset="0.45" stop-color="#8c8c8c"/><stop offset="1" stop-color="#969696"/></linearGradient>
<rect x="444" y="12" width="738" height="480" fill="url(#wfg)" />
<rect x="444.5" y="12.5" width="737" height="479" fill="none" stroke="#3c3c3c" stroke-width="1" />
<rect x="445.5" y="13.5" width="735" height="477" fill="none" stroke="#f4f4f4" stroke-width="1" />
<linearGradient id="tb" x1="0" y1="0" x2="1" y2="0"><stop offset="0" stop-color="#d8d8d8"/><stop offset="0.15" stop-color="#d2d2d2"/><stop offset="0.195" stop-color="#a2a2a2"/><stop offset="0.27" stop-color="#a0a0a0"/><stop offset="0.34" stop-color="#b8b8b8"/><stop offset="0.40" stop-color="#a4a4a4"/><stop offset="0.58" stop-color="#a6a6a6"/><stop offset="0.65" stop-color="#b4b4b4"/><stop offset="0.80" stop-color="#acacac"/><stop offset="1" stop-color="#b2b2b2"/></linearGradient>
<rect x="446" y="14" width="734" height="23" fill="url(#tb)" />
<rect x="446" y="14" width="734" height="23" fill="url(#tbv)" />
<text x="452.5" y="30" font-size="12.5" fill="#303030" text-anchor="start" font-weight="normal" textLength="109" lengthAdjust="spacingAndGlyphs" >Digital Oscilloscope</text>
<linearGradient id="cb" x1="0" y1="0" x2="0" y2="1"><stop offset="0" stop-color="#f0b4a4"/><stop offset="0.45" stop-color="#dc7c68"/><stop offset="1" stop-color="#c85a44"/></linearGradient>
<rect x="1157.5" y="18.5" width="17" height="16" fill="url(#cb)" stroke="#a86a5a" stroke-width="1" rx="2"/>
<path d="M1163,23.5 L1169,29.5 M1169,23.5 L1163,29.5" stroke="#fff" stroke-width="1.8"/>
<rect x="449.5" y="37.5" width="724" height="448" fill="none" stroke="#f8f8f8" stroke-width="1" />
<rect x="450.5" y="38.5" width="723" height="444" fill="#a8a8a8" stroke="#202020" stroke-width="1" />
<rect x="447.5" y="489.5" width="731" height="1" fill="#e8e8e8" />
<rect x="1175.5" y="38" width="1" height="448" fill="#e4e4e4" />
<rect x="451" y="39" width="426" height="443" fill="#a8a8a8" />
<rect x="451" y="39" width="2" height="443" fill="#fcfcfc" />
<rect x="451" y="39" width="426" height="2" fill="#fcfcfc" />
<rect x="453" y="41" width="424" height="1.2" fill="#181818" />
<rect x="453" y="41" width="1.2" height="441" fill="#181818" />
<rect x="454" y="42" width="1" height="422" fill="#8a908a" />
<rect x="454" y="42" width="422" height="1" fill="#8a908a" />
<rect x="455" y="43" width="420.5" height="420" fill="#000" />
<rect x="875.5" y="42" width="1" height="422" fill="#d8f0d8" />
<rect x="455" y="463" width="421" height="1.5" fill="#b8c0b8" />
<rect x="877" y="38.5" width="1.2" height="445" fill="#202020" />
<rect x="476" y="43" width="1" height="420" fill="#2a3a2a" />
<rect x="497" y="43" width="1" height="420" fill="#2a3a2a" />
<rect x="518" y="43" width="1" height="420" fill="#2a3a2a" />
<rect x="539" y="43" width="1" height="420" fill="#2a3a2a" />
<rect x="560" y="43" width="1" height="420" fill="#2a3a2a" />
<rect x="581" y="43" width="1" height="420" fill="#2a3a2a" />
<rect x="602" y="43" width="1" height="420" fill="#2a3a2a" />
<rect x="623" y="43" width="1" height="420" fill="#2a3a2a" />
<rect x="644" y="43" width="1" height="420" fill="#2a3a2a" />
<line x1="665.00" y1="43" x2="665.00" y2="463" stroke="#909090" stroke-width="1" stroke-dasharray="3,2"/>
<rect x="685" y="43" width="1" height="420" fill="#2a3a2a" />
<rect x="706" y="43" width="1" height="420" fill="#2a3a2a" />
<rect x="727" y="43" width="1" height="420" fill="#2a3a2a" />
<rect x="748" y="43" width="1" height="420" fill="#2a3a2a" />
<rect x="769" y="43" width="1" height="420" fill="#2a3a2a" />
<rect x="790" y="43" width="1" height="420" fill="#2a3a2a" />
<rect x="811" y="43" width="1" height="420" fill="#2a3a2a" />
<rect x="832" y="43" width="1" height="420" fill="#2a3a2a" />
<rect x="853" y="43" width="1" height="420" fill="#2a3a2a" />
<rect x="455" y="63" width="420.5" height="1" fill="#2a3a2a" />
<rect x="455" y="84" width="420.5" height="1" fill="#2a3a2a" />
<rect x="455" y="105" width="420.5" height="1" fill="#2a3a2a" />
<rect x="455" y="126" width="420.5" height="1" fill="#2a3a2a" />
<rect x="455" y="147" width="420.5" height="1" fill="#2a3a2a" />
<rect x="455" y="168" width="420.5" height="1" fill="#2a3a2a" />
<rect x="455" y="189" width="420.5" height="1" fill="#2a3a2a" />
<rect x="455" y="210" width="420.5" height="1" fill="#2a3a2a" />
<rect x="455" y="231" width="420.5" height="1" fill="#2a3a2a" />
<rect x="455" y="252" width="420.5" height="1" fill="#2a3a2a" />
<rect x="455" y="273" width="420.5" height="1" fill="#2a3a2a" />
<rect x="455" y="294" width="420.5" height="1" fill="#2a3a2a" />
<rect x="455" y="315" width="420.5" height="1" fill="#2a3a2a" />
<rect x="455" y="336" width="420.5" height="1" fill="#2a3a2a" />
<rect x="455" y="357" width="420.5" height="1" fill="#2a3a2a" />
<rect x="455" y="378" width="420.5" height="1" fill="#2a3a2a" />
<rect x="455" y="399" width="420.5" height="1" fill="#2a3a2a" />
<rect x="455" y="420" width="420.5" height="1" fill="#2a3a2a" />
<rect x="455" y="441" width="420.5" height="1" fill="#2a3a2a" />
<polyline points="456,266.8 473.5,265.3 473.5,265.3 473.5,158.5 482.1,163.2 482.1,270.3 491.33333333333337,269.4666666666667 500.56666666666666,268.6333333333333 509.8,267.8 519.0333333333333,266.9666666666667 528.2666666666667,266.1333333333333 537.5,265.3 537.5,265.3 537.5,158.5 546.1,163.2 546.1,270.3 555.3,269.4666666666667 564.5,268.6333333333333 573.7,267.8 582.9,266.9666666666667 592.0999999999999,266.1333333333333 601.3,265.3 601.3,265.3 601.3,158.5 609.9,163.2 609.9,270.3 619.1166666666667,269.4666666666667 628.3333333333334,268.6333333333333 637.55,267.8 646.7666666666667,266.9666666666667 655.9833333333333,266.1333333333333 665.2,265.3 665.2,265.3 665.2,158.5 673.8000000000001,163.2 673.8000000000001,270.3 682.8666666666668,269.4666666666667 691.9333333333334,268.6333333333333 701.0,267.8 710.0666666666667,266.9666666666667 719.1333333333334,266.1333333333333 728.2,265.3 728.2,265.3 728.2,158.5 736.8000000000001,163.2 736.8000000000001,270.3 748.5,268.3" stroke="#f0f0a0" stroke-width="1.15" fill="none" stroke-linejoin="miter"/>
<rect x="452" y="465.5" width="424" height="1" fill="#202020" />
<rect x="452" y="466" width="424" height="16" fill="#f0f0f0" />
<rect x="452" y="482" width="424" height="1.2" fill="#202020" />
<linearGradient id="sbt" x1="0" y1="0" x2="0" y2="1"><stop offset="0" stop-color="#ffffff"/><stop offset="1" stop-color="#e4e4e4"/></linearGradient>
<rect x="453" y="466.5" width="17" height="15" fill="url(#sbt)" />
<rect x="470" y="466.5" width="1" height="15" fill="#a0a0a0" />
<polygon points="458,474 463,469.5 463,478.5" fill="#000"/>
<rect x="471.5" y="466.5" width="263" height="15" fill="#f2f2f2" />
<rect x="734.5" y="466.5" width="1.2" height="15" fill="#a8a8a8" />
<rect x="735.5" y="466.5" width="123" height="15" fill="#fcfcfc" />
<rect x="858.5" y="466.5" width="17" height="15" fill="url(#sbt)" />
<rect x="858.5" y="466.5" width="1" height="15" fill="#a0a0a0" />
<polygon points="870,474 865,469.5 865,478.5" fill="#000"/>
<rect x="879" y="39.5" width="97" height="28" fill="#acacac" />
<rect x="879" y="39.5" width="97" height="1" fill="#f4f4f4" />
<rect x="879" y="67" width="97" height="1.2" fill="#1c1c1c" />
<rect x="879" y="68.2" width="97" height="1" fill="#ececec" />
<rect x="879" y="69" width="97" height="191" fill="#acabab" />
<rect x="879" y="260" width="97" height="1.2" fill="#1c1c1c" />
<rect x="879" y="261.5" width="97" height="28" fill="#acacac" />
<rect x="879" y="261.5" width="97" height="1" fill="#f4f4f4" />
<rect x="879" y="289" width="97" height="1.2" fill="#1c1c1c" />
<rect x="879" y="290.2" width="97" height="1" fill="#ececec" />
<rect x="879" y="291" width="97" height="191" fill="#acabab" />
<rect x="879" y="482" width="97" height="1.2" fill="#1c1c1c" />
<rect x="977" y="39.5" width="97" height="28" fill="#acacac" />
<rect x="977" y="39.5" width="97" height="1" fill="#f4f4f4" />
<rect x="977" y="67" width="97" height="1.2" fill="#1c1c1c" />
<rect x="977" y="68.2" width="97" height="1" fill="#ececec" />
<rect x="977" y="69" width="97" height="191" fill="#acabab" />
<rect x="977" y="260" width="97" height="1.2" fill="#1c1c1c" />
<rect x="977" y="261.5" width="97" height="28" fill="#acacac" />
<rect x="977" y="261.5" width="97" height="1" fill="#f4f4f4" />
<rect x="977" y="289" width="97" height="1.2" fill="#1c1c1c" />
<rect x="977" y="290.2" width="97" height="1" fill="#ececec" />
<rect x="977" y="291" width="97" height="191" fill="#acabab" />
<rect x="977" y="482" width="97" height="1.2" fill="#1c1c1c" />
<rect x="1075" y="39.5" width="98" height="28" fill="#acacac" />
<rect x="1075" y="39.5" width="98" height="1" fill="#f4f4f4" />
<rect x="1075" y="67" width="98" height="1.2" fill="#1c1c1c" />
<rect x="1075" y="68.2" width="98" height="1" fill="#ececec" />
<rect x="1075" y="69" width="98" height="191" fill="#acabab" />
<rect x="1075" y="260" width="98" height="1.2" fill="#1c1c1c" />
<rect x="1075" y="261.5" width="98" height="28" fill="#acacac" />
<rect x="1075" y="261.5" width="98" height="1" fill="#f4f4f4" />
<rect x="1075" y="289" width="98" height="1.2" fill="#1c1c1c" />
<rect x="1075" y="290.2" width="98" height="1" fill="#ececec" />
<rect x="1075" y="291" width="98" height="191" fill="#acabab" />
<rect x="1075" y="482" width="98" height="1.2" fill="#1c1c1c" />
<rect x="975.5" y="38.5" width="1.4" height="445" fill="#1c1c1c" />
<rect x="977" y="39" width="1" height="444" fill="#f0f0f0" />
<rect x="1073.5" y="38.5" width="1.4" height="445" fill="#1c1c1c" />
<rect x="1075" y="39" width="1" height="444" fill="#f0f0f0" />
<rect x="1172" y="38.5" width="1.2" height="445" fill="#1c1c1c" />
<rect x="878.2" y="39" width="1" height="444" fill="#f0f0f0" />
<text x="924" y="60" font-size="13" fill="#e8a0a8" text-anchor="middle" font-weight="bold" textLength="41" lengthAdjust="spacingAndGlyphs" opacity="0.4">Trigger</text>
<text x="1024.5" y="60" font-size="13" fill="#ecea38" text-anchor="middle" font-weight="bold" textLength="59.5" lengthAdjust="spacingAndGlyphs" opacity="1">Channel A</text>
<text x="1122.5" y="60" font-size="13" fill="#d42c7a" text-anchor="middle" font-weight="bold" textLength="58.5" lengthAdjust="spacingAndGlyphs" opacity="1">Channel C</text>
<text x="924.2" y="280.5" font-size="13" fill="#e48c44" text-anchor="middle" font-weight="bold" textLength="63.5" lengthAdjust="spacingAndGlyphs" opacity="0.9">Horizontal</text>
<text x="1024.9" y="281" font-size="13" fill="#2c8ccc" text-anchor="middle" font-weight="bold" textLength="59" lengthAdjust="spacingAndGlyphs" opacity="1">Channel B</text>
<text x="1123" y="281" font-size="13" fill="#22925a" text-anchor="middle" font-weight="bold" textLength="58.5" lengthAdjust="spacingAndGlyphs" opacity="1">Channel D</text>
<text x="910.5" y="79" font-size="10.5" fill="#464646" text-anchor="middle" font-weight="normal" textLength="25" lengthAdjust="spacingAndGlyphs" >Level</text>
<linearGradient id="drumg" x1="0" y1="0" x2="0" y2="1"><stop offset="0" stop-color="#4a4a4a"/><stop offset="0.2" stop-color="#8a8a8a"/><stop offset="0.47" stop-color="#ffffff"/><stop offset="0.53" stop-color="#ffffff"/><stop offset="0.8" stop-color="#8a8a8a"/><stop offset="1" stop-color="#4a4a4a"/></linearGradient>
<rect x="890" y="80.8" width="43" height="86" fill="none" stroke="#e4e4e4" stroke-width="1" />
<rect x="891" y="82.3" width="41" height="83" fill="#c4c4c4" stroke="#1a1a1a" stroke-width="1.6" />
<rect x="898" y="83.8" width="26" height="80" fill="url(#drumg)" />
<rect x="923" y="83.8" width="1.5" height="80" fill="#101010" />
<rect x="897.5" y="83.8" width="0.8" height="80" fill="#e8e8e8" />
<rect x="899" y="92.1" width="3" height="0.9" fill="#6a6a6a" />
<rect x="920" y="92.1" width="3" height="0.9" fill="#6a6a6a" />
<rect x="899" y="96.2" width="3" height="0.9" fill="#6a6a6a" />
<rect x="920" y="96.2" width="3" height="0.9" fill="#6a6a6a" />
<rect x="899" y="100.3" width="5" height="1" fill="#5a5a5a" />
<rect x="918" y="100.3" width="5" height="1" fill="#5a5a5a" />
<rect x="899" y="104.4" width="3" height="0.9" fill="#6a6a6a" />
<rect x="920" y="104.4" width="3" height="0.9" fill="#6a6a6a" />
<rect x="899" y="108.5" width="3" height="0.9" fill="#6a6a6a" />
<rect x="920" y="108.5" width="3" height="0.9" fill="#6a6a6a" />
<rect x="899" y="112.6" width="3" height="0.9" fill="#6a6a6a" />
<rect x="920" y="112.6" width="3" height="0.9" fill="#6a6a6a" />
<rect x="899" y="116.7" width="3" height="0.9" fill="#6a6a6a" />
<rect x="920" y="116.7" width="3" height="0.9" fill="#6a6a6a" />
<rect x="899" y="120.8" width="5" height="1" fill="#5a5a5a" />
<rect x="918" y="120.8" width="5" height="1" fill="#5a5a5a" />
<rect x="899" y="124.89999999999999" width="3" height="0.9" fill="#6a6a6a" />
<rect x="920" y="124.89999999999999" width="3" height="0.9" fill="#6a6a6a" />
<rect x="899" y="129.0" width="3" height="0.9" fill="#6a6a6a" />
<rect x="920" y="129.0" width="3" height="0.9" fill="#6a6a6a" />
<rect x="899" y="133.1" width="3" height="0.9" fill="#6a6a6a" />
<rect x="920" y="133.1" width="3" height="0.9" fill="#6a6a6a" />
<rect x="899" y="137.2" width="3" height="0.9" fill="#6a6a6a" />
<rect x="920" y="137.2" width="3" height="0.9" fill="#6a6a6a" />
<rect x="899" y="141.3" width="5" height="1" fill="#5a5a5a" />
<rect x="918" y="141.3" width="5" height="1" fill="#5a5a5a" />
<rect x="899" y="145.4" width="3" height="0.9" fill="#6a6a6a" />
<rect x="920" y="145.4" width="3" height="0.9" fill="#6a6a6a" />
<rect x="899" y="149.5" width="3" height="0.9" fill="#6a6a6a" />
<rect x="920" y="149.5" width="3" height="0.9" fill="#6a6a6a" />
<text x="911.5" y="103.7" font-size="10.5" fill="#303030" text-anchor="middle" font-weight="bold" textLength="14.5" lengthAdjust="spacingAndGlyphs" >-10</text>
<text x="911.5" y="125.1" font-size="10.5" fill="#303030" text-anchor="middle" font-weight="bold" textLength="6.5" lengthAdjust="spacingAndGlyphs" >0</text>
<text x="911.5" y="145.3" font-size="10.5" fill="#303030" text-anchor="middle" font-weight="bold" textLength="11" lengthAdjust="spacingAndGlyphs" >10</text>
<polygon points="891.5,115.8 898.5,121.3 891.5,126.8" fill="#d01818"/>
<polygon points="931.5,115.8 924,121.3 931.5,126.8" fill="#d01818"/>
<g fill="#f09aa8" stroke="#f09aa8" opacity="0.7"><polygon points="885.5,109.3 881.0,116.3 890.0,116.3" stroke="none"/><polygon points="885.5,133.3 881.0,126.3 890.0,126.3" stroke="none"/><rect x="884.5" y="115.3" width="2" height="12" stroke="none"/></g>
<text x="956" y="85" font-size="11" fill="#464646" text-anchor="end" font-weight="normal" textLength="13" lengthAdjust="spacingAndGlyphs" >AC</text>
<text x="956" y="100" font-size="11" fill="#464646" text-anchor="end" font-weight="normal" textLength="13" lengthAdjust="spacingAndGlyphs" >DC</text>
<rect x="959.5" y="71" width="14" height="34" fill="#c0c0c0" stroke="#1a1a1a" stroke-width="1.2" />
<rect x="960.5" y="72" width="12.5" height="33" fill="none" stroke="#e8e8e8" stroke-width="0.8" />
<rect x="965.3" y="88" width="2.4" height="13" fill="#080808" />
<linearGradient id="hdlg" x1="0" y1="0" x2="1" y2="0"><stop offset="0" stop-color="#f0f0f0"/><stop offset="1" stop-color="#b0b0b0"/></linearGradient>
<rect x="961.0" y="72.5" width="11" height="15" fill="url(#hdlg)" stroke="#505050" stroke-width="0.8" />
<rect x="962.5" y="75.5" width="8" height="0.9" fill="#505050" />
<rect x="962.5" y="78.1" width="8" height="0.9" fill="#505050" />
<rect x="962.5" y="80.7" width="8" height="0.9" fill="#505050" />
<rect x="962.5" y="83.3" width="8" height="0.9" fill="#505050" />
<rect x="959.5" y="117" width="14" height="35" fill="#c0c0c0" stroke="#1a1a1a" stroke-width="1.2" />
<rect x="960.5" y="118" width="12.5" height="34" fill="none" stroke="#e8e8e8" stroke-width="0.8" />
<rect x="965.3" y="134" width="2.4" height="14" fill="#080808" />
<rect x="961.0" y="118.5" width="11" height="15" fill="url(#hdlg)" stroke="#505050" stroke-width="0.8" />
<rect x="962.5" y="121.5" width="8" height="0.9" fill="#505050" />
<rect x="962.5" y="124.1" width="8" height="0.9" fill="#505050" />
<rect x="962.5" y="126.7" width="8" height="0.9" fill="#505050" />
<rect x="962.5" y="129.3" width="8" height="0.9" fill="#505050" />
<polyline points="955,122 950,122 950,134 946,134" stroke="#404040" stroke-width="1.3" fill="none" />
<polyline points="946,137 950,137 950,147 955,147" stroke="#404040" stroke-width="1.3" fill="none" />
<text x="956" y="177" font-size="10.5" fill="#464646" text-anchor="end" font-weight="normal" textLength="21" lengthAdjust="spacingAndGlyphs" >Auto</text>
<text x="956" y="193" font-size="10.5" fill="#464646" text-anchor="end" font-weight="normal" textLength="40" lengthAdjust="spacingAndGlyphs" >One-Shot</text>
<text x="956" y="209" font-size="10.5" fill="#464646" text-anchor="end" font-weight="normal" textLength="34" lengthAdjust="spacingAndGlyphs" >Cursors</text>
<radialGradient id="pinkg" cx="0.5" cy="0.5" r="0.6"><stop offset="0" stop-color="#fff0f4"/><stop offset="1" stop-color="#f0b0c0"/></radialGradient>
<rect x="959.5" y="165.5" width="14" height="14" fill="url(#pinkg)" stroke="#e0e0e0" stroke-width="1" />
<radialGradient id="btng" cx="0.3" cy="0.3" r="0.9"><stop offset="0" stop-color="#a8a8a8"/><stop offset="0.6" stop-color="#6a6a6a"/><stop offset="1" stop-color="#3a3a3a"/></radialGradient>
<rect x="959.5" y="182" width="14" height="14" fill="url(#btng)" />
<rect x="960.0" y="182.5" width="14" height="14" fill="none" stroke="#d8d8d8" stroke-width="0.8" />
<rect x="959.5" y="198.5" width="14" height="14" fill="url(#btng)" />
<rect x="960.0" y="199.0" width="14" height="14" fill="none" stroke="#d8d8d8" stroke-width="0.8" />
<text x="927" y="230.5" font-size="10.5" fill="#464646" text-anchor="middle" font-weight="normal" textLength="30" lengthAdjust="spacingAndGlyphs" >Source</text>
<text x="906" y="242" font-size="10.5" fill="#e8e840" text-anchor="middle" font-weight="bold" opacity="0.75">A</text>
<text x="921.3" y="242" font-size="10.5" fill="#40a8e0" text-anchor="middle" font-weight="bold" opacity="0.75">B</text>
<text x="936.5" y="242" font-size="10.5" fill="#e070a8" text-anchor="middle" font-weight="bold" opacity="0.75">C</text>
<text x="951.3" y="242" font-size="10.5" fill="#40a070" text-anchor="middle" font-weight="bold" opacity="0.75">D</text>
<rect x="894.5" y="244.5" width="66" height="14" fill="#c4c4c4" />
<rect x="894.5" y="244.5" width="66" height="1.2" fill="#1a1a1a" />
<rect x="894.5" y="244.5" width="1.2" height="14" fill="#1a1a1a" />
<rect x="959.5" y="244.5" width="1.2" height="14" fill="#1a1a1a" />
<rect x="895.5" y="257.5" width="65" height="1.2" fill="#f0f0f0" />
<rect x="911.5" y="250.5" width="42" height="2.4" fill="#080808" />
<rect x="896.0" y="246.0" width="15.5" height="11.5" fill="#e0e0e0" stroke="#505050" stroke-width="0.8" />
<rect x="898.5" y="247.5" width="1" height="8.5" fill="#404040" />
<rect x="901.5" y="247.5" width="1" height="8.5" fill="#404040" />
<rect x="904.5" y="247.5" width="1" height="8.5" fill="#404040" />
<rect x="907.5" y="247.5" width="1" height="8.5" fill="#404040" />
<text x="1008" y="79" font-size="10.5" fill="#464646" text-anchor="middle" font-weight="normal" textLength="33" lengthAdjust="spacingAndGlyphs" >Position</text>
<rect x="988" y="80.9" width="43" height="86" fill="none" stroke="#e4e4e4" stroke-width="1" />
<rect x="989" y="82.4" width="41" height="83" fill="#c4c4c4" stroke="#1a1a1a" stroke-width="1.6" />
<rect x="996" y="83.9" width="26" height="80" fill="url(#drumg)" />
<rect x="1021" y="83.9" width="1.5" height="80" fill="#101010" />
<rect x="995.5" y="83.9" width="0.8" height="80" fill="#e8e8e8" />
<rect x="997" y="92.20000000000002" width="3" height="0.9" fill="#6a6a6a" />
<rect x="1018" y="92.20000000000002" width="3" height="0.9" fill="#6a6a6a" />
<rect x="997" y="96.30000000000001" width="3" height="0.9" fill="#6a6a6a" />
<rect x="1018" y="96.30000000000001" width="3" height="0.9" fill="#6a6a6a" />
<rect x="997" y="100.4" width="5" height="1" fill="#5a5a5a" />
<rect x="1016" y="100.4" width="5" height="1" fill="#5a5a5a" />
<rect x="997" y="104.5" width="3" height="0.9" fill="#6a6a6a" />
<rect x="1018" y="104.5" width="3" height="0.9" fill="#6a6a6a" />
<rect x="997" y="108.60000000000001" width="3" height="0.9" fill="#6a6a6a" />
<rect x="1018" y="108.60000000000001" width="3" height="0.9" fill="#6a6a6a" />
<rect x="997" y="112.7" width="3" height="0.9" fill="#6a6a6a" />
<rect x="1018" y="112.7" width="3" height="0.9" fill="#6a6a6a" />
<rect x="997" y="116.80000000000001" width="3" height="0.9" fill="#6a6a6a" />
<rect x="1018" y="116.80000000000001" width="3" height="0.9" fill="#6a6a6a" />
<rect x="997" y="120.9" width="5" height="1" fill="#5a5a5a" />
<rect x="1016" y="120.9" width="5" height="1" fill="#5a5a5a" />
<rect x="997" y="125.0" width="3" height="0.9" fill="#6a6a6a" />
<rect x="1018" y="125.0" width="3" height="0.9" fill="#6a6a6a" />
<rect x="997" y="129.1" width="3" height="0.9" fill="#6a6a6a" />
<rect x="1018" y="129.1" width="3" height="0.9" fill="#6a6a6a" />
<rect x="997" y="133.20000000000002" width="3" height="0.9" fill="#6a6a6a" />
<rect x="1018" y="133.20000000000002" width="3" height="0.9" fill="#6a6a6a" />
<rect x="997" y="137.3" width="3" height="0.9" fill="#6a6a6a" />
<rect x="1018" y="137.3" width="3" height="0.9" fill="#6a6a6a" />
<rect x="997" y="141.4" width="5" height="1" fill="#5a5a5a" />
<rect x="1016" y="141.4" width="5" height="1" fill="#5a5a5a" />
<rect x="997" y="145.5" width="3" height="0.9" fill="#6a6a6a" />
<rect x="1018" y="145.5" width="3" height="0.9" fill="#6a6a6a" />
<rect x="997" y="149.6" width="3" height="0.9" fill="#6a6a6a" />
<rect x="1018" y="149.6" width="3" height="0.9" fill="#6a6a6a" />
<text x="1009.5" y="103.8" font-size="10.5" fill="#303030" text-anchor="middle" font-weight="bold" textLength="14.5" lengthAdjust="spacingAndGlyphs" >-10</text>
<text x="1009.5" y="125.2" font-size="10.5" fill="#303030" text-anchor="middle" font-weight="bold" textLength="6.5" lengthAdjust="spacingAndGlyphs" >0</text>
<text x="1009.5" y="145.40000000000003" font-size="10.5" fill="#303030" text-anchor="middle" font-weight="bold" textLength="11" lengthAdjust="spacingAndGlyphs" >10</text>
<polygon points="989.5,115.9 996.5,121.4 989.5,126.9" fill="#d01818"/>
<polygon points="1029.5,115.9 1022,121.4 1029.5,126.9" fill="#d01818"/>
<g fill="#f4f030" stroke="#f4f030" opacity="1.0"><polygon points="983.5,109.4 979.0,116.4 988.0,116.4" stroke="none"/><polygon points="983.5,133.4 979.0,126.4 988.0,126.4" stroke="none"/><rect x="982.5" y="115.4" width="2" height="12" stroke="none"/></g>
<text x="1055" y="85" font-size="11" fill="#464646" text-anchor="end" font-weight="normal" textLength="13" lengthAdjust="spacingAndGlyphs" >AC</text>
<text x="1055" y="100" font-size="11" fill="#464646" text-anchor="end" font-weight="normal" textLength="13" lengthAdjust="spacingAndGlyphs" >DC</text>
<text x="1055" y="114.6" font-size="11" fill="#464646" text-anchor="end" font-weight="normal" textLength="20" lengthAdjust="spacingAndGlyphs" >GND</text>
<text x="1055" y="129.5" font-size="11" fill="#464646" text-anchor="end" font-weight="normal" textLength="18" lengthAdjust="spacingAndGlyphs" >OFF</text>
<rect x="1057.5" y="71" width="14" height="64.5" fill="#c0c0c0" stroke="#1a1a1a" stroke-width="1.2" />
<rect x="1058.5" y="72" width="12.5" height="63.5" fill="none" stroke="#e8e8e8" stroke-width="0.8" />
<rect x="1063.3" y="88" width="2.4" height="43.5" fill="#080808" />
<rect x="1059.0" y="72.5" width="11" height="15" fill="url(#hdlg)" stroke="#505050" stroke-width="0.8" />
<rect x="1060.5" y="75.5" width="8" height="0.9" fill="#505050" />
<rect x="1060.5" y="78.1" width="8" height="0.9" fill="#505050" />
<rect x="1060.5" y="80.7" width="8" height="0.9" fill="#505050" />
<rect x="1060.5" y="83.3" width="8" height="0.9" fill="#505050" />
<text x="1055" y="149" font-size="10.5" fill="#464646" text-anchor="end" font-weight="normal" textLength="23" lengthAdjust="spacingAndGlyphs" >Invert</text>
<text x="1055" y="166" font-size="10.5" fill="#464646" text-anchor="end" font-weight="normal" textLength="19" lengthAdjust="spacingAndGlyphs" >A+B</text>
<rect x="1057.5" y="138.5" width="14" height="14" fill="url(#btng)" />
<rect x="1058.0" y="139.0" width="14" height="14" fill="none" stroke="#d8d8d8" stroke-width="0.8" />
<rect x="1057.5" y="155.5" width="14" height="14" fill="url(#btng)" />
<rect x="1058.0" y="156.0" width="14" height="14" fill="none" stroke="#d8d8d8" stroke-width="0.8" />
<radialGradient id="kng" cx="0.4" cy="0.3" r="0.75"><stop offset="0" stop-color="#e2e2e2"/><stop offset="0.5" stop-color="#b4b4b4"/><stop offset="0.85" stop-color="#909090"/><stop offset="1" stop-color="#7a7a7a"/></radialGradient>
<linearGradient id="capg" x1="0.1" y1="0" x2="0.9" y2="1"><stop offset="0" stop-color="#9a9a9a"/><stop offset="0.3" stop-color="#d4d4d4"/><stop offset="0.47" stop-color="#fcfcfc"/><stop offset="0.56" stop-color="#b4b4b4"/><stop offset="0.8" stop-color="#a4a4a4"/><stop offset="1" stop-color="#d8d8d8"/></linearGradient>
<path d="M980.5,258.5 L980.5,212.5 A45.5,45.5 0 0 1 1071.5,212.5 L1071.5,258.5 Z" fill="#fbfbfb" stroke="#3a3a3a" stroke-width="1.2"/>
<line x1="1044.4698442597698" y1="188.85967739179833" x2="1054.6282586026432" y2="175.85749995728742" stroke="#4a4a4a" stroke-width="4" />
<line x1="1044.4698442597698" y1="188.85967739179833" x2="1054.6282586026432" y2="175.85749995728742" stroke="#c0c0c0" stroke-width="2" />
<rect x="1005.5" y="236.5" width="41" height="22.0" fill="#acabab" />
<rect x="1005" y="236.5" width="1" height="22.0" fill="#3a3a3a" />
<rect x="1046" y="236.5" width="1" height="22.0" fill="#3a3a3a" />
<text x="995.5" y="244.0" font-size="9" fill="#3a3a3a" text-anchor="middle" font-weight="normal" textLength="9.8" lengthAdjust="spacingAndGlyphs" >20</text>
<text x="987" y="231.5" font-size="9" fill="#3a3a3a" text-anchor="middle" font-weight="normal" textLength="9.8" lengthAdjust="spacingAndGlyphs" >10</text>
<text x="985.5" y="216.0" font-size="9" fill="#3a3a3a" text-anchor="middle" font-weight="normal" textLength="4.9" lengthAdjust="spacingAndGlyphs" >5</text>
<text x="988" y="201.7" font-size="9" fill="#3a3a3a" text-anchor="middle" font-weight="normal" textLength="4.9" lengthAdjust="spacingAndGlyphs" >2</text>
<text x="997" y="187.2" font-size="9" fill="#3a3a3a" text-anchor="middle" font-weight="normal" textLength="4.9" lengthAdjust="spacingAndGlyphs" >1</text>
<text x="1010.8" y="178.2" font-size="9" fill="#3a3a3a" text-anchor="middle" font-weight="normal" textLength="12.6" lengthAdjust="spacingAndGlyphs" >0.5</text>
<text x="1026" y="175.5" font-size="9" fill="#3a3a3a" text-anchor="middle" font-weight="normal" textLength="12.6" lengthAdjust="spacingAndGlyphs" >0.2</text>
<text x="1041.5" y="178.2" font-size="9" fill="#3a3a3a" text-anchor="middle" font-weight="normal" textLength="12.6" lengthAdjust="spacingAndGlyphs" >0.1</text>
<text x="1056" y="187.2" font-size="9" fill="#3a3a3a" text-anchor="middle" font-weight="normal" textLength="9.8" lengthAdjust="spacingAndGlyphs" >50</text>
<text x="1064" y="201.7" font-size="9" fill="#3a3a3a" text-anchor="middle" font-weight="normal" textLength="9.8" lengthAdjust="spacingAndGlyphs" >20</text>
<text x="1066.8" y="216.0" font-size="9" fill="#3a3a3a" text-anchor="middle" font-weight="normal" textLength="9.8" lengthAdjust="spacingAndGlyphs" >10</text>
<text x="1063" y="231.5" font-size="9" fill="#3a3a3a" text-anchor="middle" font-weight="normal" textLength="4.9" lengthAdjust="spacingAndGlyphs" >5</text>
<text x="1055" y="244.0" font-size="9" fill="#3a3a3a" text-anchor="middle" font-weight="normal" textLength="4.9" lengthAdjust="spacingAndGlyphs" >2</text>
<text x="992.5" y="255.5" font-size="11" fill="#404040" text-anchor="middle" font-weight="normal" >V</text>
<text x="1059.5" y="255.5" font-size="11" fill="#404040" text-anchor="middle" font-weight="normal" >mV</text>
<line x1="1003.3496383932128" y1="233.6650919932274" x2="1000.4270110891111" y2="236.39607160525676" stroke="#303030" stroke-width="1" />
<line x1="997.3197728303829" y1="224.2662470439455" x2="993.6190983568839" y2="225.7844724689707" stroke="#303030" stroke-width="1" />
<line x1="995.0023621747282" y1="212.88268688673176" x2="991.0026669714673" y2="212.93206583985844" stroke="#303030" stroke-width="1" />
<line x1="996.8619288603238" y1="201.91827942822286" x2="993.1021777455269" y2="200.5528961286387" stroke="#303030" stroke-width="1" />
<line x1="1003.8135578949981" y1="190.8490927044292" x2="1000.950791171772" y2="188.0554272469362" stroke="#303030" stroke-width="1" />
<line x1="1014.3013517717411" y1="183.7921329661806" x2="1012.7918487745465" y2="180.08789205859097" stroke="#303030" stroke-width="1" />
<line x1="1026.0" y1="181.5" x2="1026.0" y2="177.5" stroke="#303030" stroke-width="1" />
<line x1="1037.8958239729593" y1="183.87327521345895" x2="1039.4307690017283" y2="180.1795042732601" stroke="#303030" stroke-width="1" />
<line x1="1048.5499111298907" y1="191.2279171674697" x2="1051.4595770821347" y2="188.48313228585292" stroke="#303030" stroke-width="1" />
<line x1="1055.1380711396762" y1="201.91827942822286" x2="1058.897822254473" y2="200.55289612863874" stroke="#303030" stroke-width="1" />
<line x1="1056.997672431525" y1="212.87987343666086" x2="1060.9973721001088" y2="212.92888936397193" stroke="#303030" stroke-width="1" />
<line x1="1054.4535681147645" y1="224.80424567124948" x2="1058.124996258605" y2="226.39189027399135" stroke="#303030" stroke-width="1" />
<line x1="1048.1100857057093" y1="234.22887733147283" x2="1050.9629999903168" y2="237.03260343875965" stroke="#303030" stroke-width="1" />
<circle cx="1026.8" cy="213.5" r="31.8" fill="#5c5c5c"/>
<circle cx="1026" cy="212.5" r="31" fill="url(#kng)"/>
<circle cx="1027.2" cy="214.1" r="16.2" fill="#6e6e6e"/>
<circle cx="1026" cy="212.5" r="15.6" fill="url(#capg)"/>
<rect x="1008" y="245.5" width="37" height="13" fill="#ffffff" />
<rect x="1007.5" y="245.0" width="37.5" height="1" fill="#404040" />
<rect x="1007.5" y="245.0" width="1" height="13.5" fill="#404040" />
<text x="1010" y="256.0" font-size="10.5" fill="#262626" text-anchor="start" font-weight="normal" textLength="19" lengthAdjust="spacingAndGlyphs" >2.35</text>
<polygon points="999.1,201.6 1010.6,201.0 1006.9,210.1" fill="#e8e020"/>
<polygon points="1039.3,216.8 1032.3,217.7 1034.2,212.0" fill="#e8e020"/>
<text x="1106" y="79" font-size="10.5" fill="#464646" text-anchor="middle" font-weight="normal" textLength="33" lengthAdjust="spacingAndGlyphs" >Position</text>
<rect x="1086" y="81.0" width="43" height="86" fill="none" stroke="#e4e4e4" stroke-width="1" />
<rect x="1087" y="82.5" width="41" height="83" fill="#c4c4c4" stroke="#1a1a1a" stroke-width="1.6" />
<rect x="1094" y="84.0" width="26" height="80" fill="url(#drumg)" />
<rect x="1119" y="84.0" width="1.5" height="80" fill="#101010" />
<rect x="1093.5" y="84.0" width="0.8" height="80" fill="#e8e8e8" />
<rect x="1095" y="92.30000000000001" width="3" height="0.9" fill="#6a6a6a" />
<rect x="1116" y="92.30000000000001" width="3" height="0.9" fill="#6a6a6a" />
<rect x="1095" y="96.4" width="3" height="0.9" fill="#6a6a6a" />
<rect x="1116" y="96.4" width="3" height="0.9" fill="#6a6a6a" />
<rect x="1095" y="100.5" width="5" height="1" fill="#5a5a5a" />
<rect x="1114" y="100.5" width="5" height="1" fill="#5a5a5a" />
<rect x="1095" y="104.6" width="3" height="0.9" fill="#6a6a6a" />
<rect x="1116" y="104.6" width="3" height="0.9" fill="#6a6a6a" />
<rect x="1095" y="108.7" width="3" height="0.9" fill="#6a6a6a" />
<rect x="1116" y="108.7" width="3" height="0.9" fill="#6a6a6a" />
<rect x="1095" y="112.8" width="3" height="0.9" fill="#6a6a6a" />
<rect x="1116" y="112.8" width="3" height="0.9" fill="#6a6a6a" />
<rect x="1095" y="116.9" width="3" height="0.9" fill="#6a6a6a" />
<rect x="1116" y="116.9" width="3" height="0.9" fill="#6a6a6a" />
<rect x="1095" y="121.0" width="5" height="1" fill="#5a5a5a" />
<rect x="1114" y="121.0" width="5" height="1" fill="#5a5a5a" />
<rect x="1095" y="125.1" width="3" height="0.9" fill="#6a6a6a" />
<rect x="1116" y="125.1" width="3" height="0.9" fill="#6a6a6a" />
<rect x="1095" y="129.2" width="3" height="0.9" fill="#6a6a6a" />
<rect x="1116" y="129.2" width="3" height="0.9" fill="#6a6a6a" />
<rect x="1095" y="133.3" width="3" height="0.9" fill="#6a6a6a" />
<rect x="1116" y="133.3" width="3" height="0.9" fill="#6a6a6a" />
<rect x="1095" y="137.4" width="3" height="0.9" fill="#6a6a6a" />
<rect x="1116" y="137.4" width="3" height="0.9" fill="#6a6a6a" />
<rect x="1095" y="141.5" width="5" height="1" fill="#5a5a5a" />
<rect x="1114" y="141.5" width="5" height="1" fill="#5a5a5a" />
<rect x="1095" y="145.6" width="3" height="0.9" fill="#6a6a6a" />
<rect x="1116" y="145.6" width="3" height="0.9" fill="#6a6a6a" />
<rect x="1095" y="149.7" width="3" height="0.9" fill="#6a6a6a" />
<rect x="1116" y="149.7" width="3" height="0.9" fill="#6a6a6a" />
<text x="1107.5" y="103.89999999999999" font-size="10.5" fill="#303030" text-anchor="middle" font-weight="bold" textLength="14.5" lengthAdjust="spacingAndGlyphs" >-50</text>
<text x="1107.5" y="125.3" font-size="10.5" fill="#303030" text-anchor="middle" font-weight="bold" textLength="14.5" lengthAdjust="spacingAndGlyphs" >-40</text>
<text x="1107.5" y="145.5" font-size="10.5" fill="#303030" text-anchor="middle" font-weight="bold" textLength="14.5" lengthAdjust="spacingAndGlyphs" >-30</text>
<polygon points="1087.5,116.0 1094.5,121.5 1087.5,127.0" fill="#d01818"/>
<polygon points="1127.5,116.0 1120,121.5 1127.5,127.0" fill="#d01818"/>
<g fill="#e03c86" stroke="#e03c86" opacity="1.0"><polygon points="1081.5,109.5 1077.0,116.5 1086.0,116.5" stroke="none"/><polygon points="1081.5,133.5 1077.0,126.5 1086.0,126.5" stroke="none"/><rect x="1080.5" y="115.5" width="2" height="12" stroke="none"/></g>
<text x="1153.5" y="85" font-size="11" fill="#464646" text-anchor="end" font-weight="normal" textLength="13" lengthAdjust="spacingAndGlyphs" >AC</text>
<text x="1153.5" y="100" font-size="11" fill="#464646" text-anchor="end" font-weight="normal" textLength="13" lengthAdjust="spacingAndGlyphs" >DC</text>
<text x="1153.5" y="114.6" font-size="11" fill="#464646" text-anchor="end" font-weight="normal" textLength="20" lengthAdjust="spacingAndGlyphs" >GND</text>
<text x="1153.5" y="129.5" font-size="11" fill="#464646" text-anchor="end" font-weight="normal" textLength="18" lengthAdjust="spacingAndGlyphs" >OFF</text>
<rect x="1156.5" y="71" width="14" height="64.5" fill="#c0c0c0" stroke="#1a1a1a" stroke-width="1.2" />
<rect x="1157.5" y="72" width="12.5" height="63.5" fill="none" stroke="#e8e8e8" stroke-width="0.8" />
<rect x="1162.3" y="76" width="2.4" height="42.5" fill="#080808" />
<rect x="1158.0" y="119.0" width="11" height="15" fill="url(#hdlg)" stroke="#505050" stroke-width="0.8" />
<rect x="1159.5" y="122.0" width="8" height="0.9" fill="#505050" />
<rect x="1159.5" y="124.6" width="8" height="0.9" fill="#505050" />
<rect x="1159.5" y="127.2" width="8" height="0.9" fill="#505050" />
<rect x="1159.5" y="129.8" width="8" height="0.9" fill="#505050" />
<text x="1153.5" y="149" font-size="10.5" fill="#464646" text-anchor="end" font-weight="normal" textLength="23" lengthAdjust="spacingAndGlyphs" >Invert</text>
<text x="1153.5" y="166" font-size="10.5" fill="#464646" text-anchor="end" font-weight="normal" textLength="19" lengthAdjust="spacingAndGlyphs" >C+D</text>
<rect x="1156" y="138.5" width="14" height="14" fill="url(#btng)" />
<rect x="1156.5" y="139.0" width="14" height="14" fill="none" stroke="#d8d8d8" stroke-width="0.8" />
<rect x="1156" y="155.5" width="14" height="14" fill="url(#btng)" />
<rect x="1156.5" y="156.0" width="14" height="14" fill="none" stroke="#d8d8d8" stroke-width="0.8" />
<path d="M1078.7,258.8 L1078.7,212.8 A45.5,45.5 0 0 1 1169.7,212.8 L1169.7,258.8 Z" fill="#fbfbfb" stroke="#3a3a3a" stroke-width="1.2"/>
<line x1="1142.66984425977" y1="189.15967739179834" x2="1152.8282586026432" y2="176.15749995728743" stroke="#4a4a4a" stroke-width="4" />
<line x1="1142.66984425977" y1="189.15967739179834" x2="1152.8282586026432" y2="176.15749995728743" stroke="#c0c0c0" stroke-width="2" />
<rect x="1103.7" y="236.8" width="41" height="22.0" fill="#acabab" />
<rect x="1103.2" y="236.8" width="1" height="22.0" fill="#3a3a3a" />
<rect x="1144.2" y="236.8" width="1" height="22.0" fill="#3a3a3a" />
<text x="1093.7" y="244.3" font-size="9" fill="#3a3a3a" text-anchor="middle" font-weight="normal" textLength="9.8" lengthAdjust="spacingAndGlyphs" >20</text>
<text x="1085.2" y="231.8" font-size="9" fill="#3a3a3a" text-anchor="middle" font-weight="normal" textLength="9.8" lengthAdjust="spacingAndGlyphs" >10</text>
<text x="1083.7" y="216.3" font-size="9" fill="#3a3a3a" text-anchor="middle" font-weight="normal" textLength="4.9" lengthAdjust="spacingAndGlyphs" >5</text>
<text x="1086.2" y="202.0" font-size="9" fill="#3a3a3a" text-anchor="middle" font-weight="normal" textLength="4.9" lengthAdjust="spacingAndGlyphs" >2</text>
<text x="1095.2" y="187.5" font-size="9" fill="#3a3a3a" text-anchor="middle" font-weight="normal" textLength="4.9" lengthAdjust="spacingAndGlyphs" >1</text>
<text x="1109.0" y="178.5" font-size="9" fill="#3a3a3a" text-anchor="middle" font-weight="normal" textLength="12.6" lengthAdjust="spacingAndGlyphs" >0.5</text>
<text x="1124.2" y="175.8" font-size="9" fill="#3a3a3a" text-anchor="middle" font-weight="normal" textLength="12.6" lengthAdjust="spacingAndGlyphs" >0.2</text>
<text x="1139.7" y="178.5" font-size="9" fill="#3a3a3a" text-anchor="middle" font-weight="normal" textLength="12.6" lengthAdjust="spacingAndGlyphs" >0.1</text>
<text x="1154.2" y="187.5" font-size="9" fill="#3a3a3a" text-anchor="middle" font-weight="normal" textLength="9.8" lengthAdjust="spacingAndGlyphs" >50</text>
<text x="1162.2" y="202.0" font-size="9" fill="#3a3a3a" text-anchor="middle" font-weight="normal" textLength="9.8" lengthAdjust="spacingAndGlyphs" >20</text>
<text x="1165.0" y="216.3" font-size="9" fill="#3a3a3a" text-anchor="middle" font-weight="normal" textLength="9.8" lengthAdjust="spacingAndGlyphs" >10</text>
<text x="1161.2" y="231.8" font-size="9" fill="#3a3a3a" text-anchor="middle" font-weight="normal" textLength="4.9" lengthAdjust="spacingAndGlyphs" >5</text>
<text x="1153.2" y="244.3" font-size="9" fill="#3a3a3a" text-anchor="middle" font-weight="normal" textLength="4.9" lengthAdjust="spacingAndGlyphs" >2</text>
<text x="1090.7" y="255.8" font-size="11" fill="#404040" text-anchor="middle" font-weight="normal" >V</text>
<text x="1157.7" y="255.8" font-size="11" fill="#404040" text-anchor="middle" font-weight="normal" >mV</text>
<line x1="1101.5496383932127" y1="233.96509199322742" x2="1098.6270110891112" y2="236.69607160525678" stroke="#303030" stroke-width="1" />
<line x1="1095.5197728303829" y1="224.5662470439455" x2="1091.8190983568838" y2="226.08447246897072" stroke="#303030" stroke-width="1" />
<line x1="1093.2023621747283" y1="213.18268688673177" x2="1089.2026669714674" y2="213.23206583985845" stroke="#303030" stroke-width="1" />
<line x1="1095.0619288603239" y1="202.21827942822287" x2="1091.302177745527" y2="200.85289612863872" stroke="#303030" stroke-width="1" />
<line x1="1102.0135578949983" y1="191.14909270442922" x2="1099.1507911717722" y2="188.35542724693622" stroke="#303030" stroke-width="1" />
<line x1="1112.5013517717412" y1="184.0921329661806" x2="1110.9918487745465" y2="180.38789205859098" stroke="#303030" stroke-width="1" />
<line x1="1124.2" y1="181.8" x2="1124.2" y2="177.8" stroke="#303030" stroke-width="1" />
<line x1="1136.0958239729594" y1="184.17327521345896" x2="1137.6307690017284" y2="180.47950427326012" stroke="#303030" stroke-width="1" />
<line x1="1146.7499111298907" y1="191.52791716746972" x2="1149.6595770821348" y2="188.78313228585293" stroke="#303030" stroke-width="1" />
<line x1="1153.3380711396762" y1="202.21827942822287" x2="1157.0978222544732" y2="200.85289612863875" stroke="#303030" stroke-width="1" />
<line x1="1155.197672431525" y1="213.17987343666087" x2="1159.1973721001089" y2="213.22888936397194" stroke="#303030" stroke-width="1" />
<line x1="1152.6535681147645" y1="225.1042456712495" x2="1156.324996258605" y2="226.69189027399136" stroke="#303030" stroke-width="1" />
<line x1="1146.3100857057093" y1="234.52887733147284" x2="1149.1629999903168" y2="237.33260343875966" stroke="#303030" stroke-width="1" />
<circle cx="1125.0" cy="213.8" r="31.8" fill="#5c5c5c"/>
<circle cx="1124.2" cy="212.8" r="31" fill="url(#kng)"/>
<circle cx="1125.4" cy="214.4" r="16.2" fill="#6e6e6e"/>
<circle cx="1124.2" cy="212.8" r="15.6" fill="url(#capg)"/>
<rect x="1106.2" y="245.8" width="37" height="13" fill="#ffffff" />
<rect x="1105.7" y="245.3" width="37.5" height="1" fill="#404040" />
<rect x="1105.7" y="245.3" width="1" height="13.5" fill="#404040" />
<text x="1108.2" y="256.3" font-size="10.5" fill="#262626" text-anchor="start" font-weight="normal" >5</text>
<polygon points="1095.2,212.8 1105.6,207.9 1105.6,217.7" fill="#d0206a"/>
<polygon points="1134.6,222.2 1127.8,220.1 1131.9,215.7" fill="#d0206a"/>
<text x="926.5" y="303.5" font-size="10.5" fill="#464646" text-anchor="middle" font-weight="normal" textLength="30" lengthAdjust="spacingAndGlyphs" >Source</text>
<polyline points="890,314 897,305 903,312" stroke="#d8a080" stroke-width="1.5" fill="none" opacity="0.7"/>
<text x="912" y="313.5" font-size="10.5" fill="#e8e840" text-anchor="middle" font-weight="bold" opacity="0.75">A</text>
<text x="927" y="313.5" font-size="10.5" fill="#40a8e0" text-anchor="middle" font-weight="bold" opacity="0.75">B</text>
<text x="942" y="313.5" font-size="10.5" fill="#e070a8" text-anchor="middle" font-weight="bold" opacity="0.75">C</text>
<text x="957.5" y="313.5" font-size="10.5" fill="#40a070" text-anchor="middle" font-weight="bold" opacity="0.75">D</text>
<rect x="886.5" y="316.5" width="82" height="14" fill="#c4c4c4" />
<rect x="886.5" y="316.5" width="82" height="1.2" fill="#1a1a1a" />
<rect x="886.5" y="316.5" width="1.2" height="14" fill="#1a1a1a" />
<rect x="967.5" y="316.5" width="1.2" height="14" fill="#1a1a1a" />
<rect x="887.5" y="329.5" width="81" height="1.2" fill="#f0f0f0" />
<rect x="903.5" y="322.5" width="58" height="2.4" fill="#080808" />
<rect x="888.0" y="318.0" width="15.5" height="11.5" fill="#e0e0e0" stroke="#505050" stroke-width="0.8" />
<rect x="890.5" y="319.5" width="1" height="8.5" fill="#404040" />
<rect x="893.5" y="319.5" width="1" height="8.5" fill="#404040" />
<rect x="896.5" y="319.5" width="1" height="8.5" fill="#404040" />
<rect x="899.5" y="319.5" width="1" height="8.5" fill="#404040" />
<text x="927" y="343" font-size="10.5" fill="#464646" text-anchor="middle" font-weight="normal" textLength="33" lengthAdjust="spacingAndGlyphs" >Position</text>
<linearGradient id="hdrum" x1="0" y1="0" x2="1" y2="0"><stop offset="0" stop-color="#4a4a4a"/><stop offset="0.25" stop-color="#8a8a8a"/><stop offset="0.48" stop-color="#ffffff"/><stop offset="0.52" stop-color="#ffffff"/><stop offset="0.75" stop-color="#8a8a8a"/><stop offset="1" stop-color="#4a4a4a"/></linearGradient>
<rect x="886" y="345" width="84" height="42" fill="none" stroke="#e4e4e4" stroke-width="1" />
<rect x="887" y="346" width="82" height="40" fill="#c4c4c4" stroke="#1a1a1a" stroke-width="1.5" />
<rect x="888.5" y="353.5" width="79" height="25" fill="url(#hdrum)" />
<rect x="888.5" y="377.5" width="79" height="1.5" fill="#101010" />
<rect x="888.7" y="354" width="1" height="3" fill="#505050" />
<rect x="888.7" y="374" width="1" height="3" fill="#505050" />
<rect x="892.9" y="354" width="1" height="3" fill="#505050" />
<rect x="892.9" y="374" width="1" height="3" fill="#505050" />
<rect x="897.1" y="354" width="1" height="3" fill="#505050" />
<rect x="897.1" y="374" width="1" height="3" fill="#505050" />
<rect x="901.3" y="354" width="1" height="3" fill="#505050" />
<rect x="901.3" y="374" width="1" height="3" fill="#505050" />
<rect x="905.5" y="354" width="1" height="5" fill="#505050" />
<rect x="905.5" y="372" width="1" height="5" fill="#505050" />
<rect x="909.7" y="354" width="1" height="3" fill="#505050" />
<rect x="909.7" y="374" width="1" height="3" fill="#505050" />
<rect x="913.9" y="354" width="1" height="3" fill="#505050" />
<rect x="913.9" y="374" width="1" height="3" fill="#505050" />
<rect x="918.1" y="354" width="1" height="3" fill="#505050" />
<rect x="918.1" y="374" width="1" height="3" fill="#505050" />
<rect x="922.3" y="354" width="1" height="3" fill="#505050" />
<rect x="922.3" y="374" width="1" height="3" fill="#505050" />
<rect x="926.5" y="354" width="1" height="5" fill="#505050" />
<rect x="926.5" y="372" width="1" height="5" fill="#505050" />
<rect x="930.7" y="354" width="1" height="3" fill="#505050" />
<rect x="930.7" y="374" width="1" height="3" fill="#505050" />
<rect x="934.9" y="354" width="1" height="3" fill="#505050" />
<rect x="934.9" y="374" width="1" height="3" fill="#505050" />
<rect x="939.1" y="354" width="1" height="3" fill="#505050" />
<rect x="939.1" y="374" width="1" height="3" fill="#505050" />
<rect x="943.3" y="354" width="1" height="3" fill="#505050" />
<rect x="943.3" y="374" width="1" height="3" fill="#505050" />
<rect x="947.5" y="354" width="1" height="5" fill="#505050" />
<rect x="947.5" y="372" width="1" height="5" fill="#505050" />
<rect x="951.7" y="354" width="1" height="3" fill="#505050" />
<rect x="951.7" y="374" width="1" height="3" fill="#505050" />
<rect x="955.9" y="354" width="1" height="3" fill="#505050" />
<rect x="955.9" y="374" width="1" height="3" fill="#505050" />
<rect x="960.1" y="354" width="1" height="3" fill="#505050" />
<rect x="960.1" y="374" width="1" height="3" fill="#505050" />
<rect x="964.3" y="354" width="1" height="3" fill="#505050" />
<rect x="964.3" y="374" width="1" height="3" fill="#505050" />
<text x="905.5" y="369.5" font-size="10.5" fill="#202020" text-anchor="middle" font-weight="normal" textLength="15.5" lengthAdjust="spacingAndGlyphs" >210</text>
<text x="926.8" y="369.5" font-size="10.5" fill="#202020" text-anchor="middle" font-weight="normal" textLength="15.5" lengthAdjust="spacingAndGlyphs" >200</text>
<text x="948" y="369.5" font-size="10.5" fill="#202020" text-anchor="middle" font-weight="normal" textLength="15.5" lengthAdjust="spacingAndGlyphs" >190</text>
<polygon points="921.5,347 932,347 926.8,352.5" fill="#d01818"/>
<polygon points="921.5,386 932,386 926.8,380.5" fill="#d01818"/>
<path d="M881.5,480.0 L881.5,434 A45.5,45.5 0 0 1 972.5,434 L972.5,480.0 Z" fill="#fbfbfb" stroke="#3a3a3a" stroke-width="1.2"/>
<line x1="945.4698442597697" y1="410.35967739179836" x2="955.6282586026431" y2="397.3574999572874" stroke="#4a4a4a" stroke-width="4" />
<line x1="945.4698442597697" y1="410.35967739179836" x2="955.6282586026431" y2="397.3574999572874" stroke="#c0c0c0" stroke-width="2" />
<rect x="906.5" y="458" width="41" height="22.0" fill="#acabab" />
<rect x="906" y="458" width="1" height="22.0" fill="#3a3a3a" />
<rect x="947" y="458" width="1" height="22.0" fill="#3a3a3a" />
<text x="898" y="467.8" font-size="9" fill="#3a3a3a" text-anchor="middle" font-weight="normal" textLength="14.7" lengthAdjust="spacingAndGlyphs" >200</text>
<text x="889" y="458.7" font-size="9" fill="#3a3a3a" text-anchor="middle" font-weight="normal" textLength="14.7" lengthAdjust="spacingAndGlyphs" >100</text>
<text x="887" y="448" font-size="9" fill="#3a3a3a" text-anchor="middle" font-weight="normal" textLength="9.8" lengthAdjust="spacingAndGlyphs" >50</text>
<text x="887" y="436" font-size="9" fill="#3a3a3a" text-anchor="middle" font-weight="normal" textLength="9.8" lengthAdjust="spacingAndGlyphs" >20</text>
<text x="888" y="425.3" font-size="9" fill="#3a3a3a" text-anchor="middle" font-weight="normal" textLength="9.8" lengthAdjust="spacingAndGlyphs" >10</text>
<text x="893.5" y="414.5" font-size="9" fill="#3a3a3a" text-anchor="middle" font-weight="normal" textLength="4.9" lengthAdjust="spacingAndGlyphs" >5</text>
<text x="901.6" y="406.4" font-size="9" fill="#3a3a3a" text-anchor="middle" font-weight="normal" textLength="4.9" lengthAdjust="spacingAndGlyphs" >2</text>
<text x="911.5" y="400" font-size="9" fill="#3a3a3a" text-anchor="middle" font-weight="normal" textLength="4.9" lengthAdjust="spacingAndGlyphs" >1</text>
<text x="922.3" y="395.6" font-size="9" fill="#3a3a3a" text-anchor="middle" font-weight="normal" textLength="12.6" lengthAdjust="spacingAndGlyphs" >0.5</text>
<text x="934" y="395.6" font-size="9" fill="#3a3a3a" text-anchor="middle" font-weight="normal" textLength="12.6" lengthAdjust="spacingAndGlyphs" >0.2</text>
<text x="944" y="400" font-size="9" fill="#3a3a3a" text-anchor="middle" font-weight="normal" textLength="12.6" lengthAdjust="spacingAndGlyphs" >0.1</text>
<text x="954.8" y="408" font-size="9" fill="#3a3a3a" text-anchor="middle" font-weight="normal" textLength="9.8" lengthAdjust="spacingAndGlyphs" >50</text>
<text x="962" y="415.4" font-size="9" fill="#3a3a3a" text-anchor="middle" font-weight="normal" textLength="9.8" lengthAdjust="spacingAndGlyphs" >20</text>
<text x="965.7" y="425.3" font-size="9" fill="#3a3a3a" text-anchor="middle" font-weight="normal" textLength="9.8" lengthAdjust="spacingAndGlyphs" >10</text>
<text x="968.4" y="436" font-size="9" fill="#3a3a3a" text-anchor="middle" font-weight="normal" textLength="4.9" lengthAdjust="spacingAndGlyphs" >5</text>
<text x="967.5" y="447" font-size="9" fill="#3a3a3a" text-anchor="middle" font-weight="normal" textLength="4.9" lengthAdjust="spacingAndGlyphs" >2</text>
<text x="964.8" y="459.6" font-size="9" fill="#3a3a3a" text-anchor="middle" font-weight="normal" textLength="4.9" lengthAdjust="spacingAndGlyphs" >1</text>
<text x="956.6" y="467.8" font-size="9" fill="#3a3a3a" text-anchor="middle" font-weight="normal" textLength="12.6" lengthAdjust="spacingAndGlyphs" >0.5</text>
<text x="893.5" y="477" font-size="11" fill="#404040" text-anchor="middle" font-weight="normal" >ms</text>
<text x="960.5" y="477" font-size="11" fill="#404040" text-anchor="middle" font-weight="normal" >μs</text>
<line x1="905.7491232397144" y1="456.56989669713084" x2="903.007074625484" y2="459.4821414322445" stroke="#303030" stroke-width="1" />
<line x1="900.0801041780671" y1="449.3726773509459" x2="896.6065692333017" y2="451.35624862203565" stroke="#303030" stroke-width="1" />
<line x1="897.1096328230825" y1="442.21985097365234" x2="893.2528112518673" y2="443.28047690573646" stroke="#303030" stroke-width="1" />
<line x1="896.0096829613482" y1="433.2252420740337" x2="892.0109323757157" y2="433.1252733093929" stroke="#303030" stroke-width="1" />
<line x1="897.3073851581443" y1="425.0922155474433" x2="893.4760800172597" y2="423.9428240051779" stroke="#303030" stroke-width="1" />
<line x1="901.2656845971393" y1="416.7157583115115" x2="897.9451277709637" y2="414.4855335775129" stroke="#303030" stroke-width="1" />
<line x1="907.2003247893031" y1="410.1468479745147" x2="904.6455279879228" y2="407.06902190671013" stroke="#303030" stroke-width="1" />
<line x1="915.0220737950124" y1="405.4075309945456" x2="913.4765349298526" y2="401.71818015513213" stroke="#303030" stroke-width="1" />
<line x1="923.5031384546952" y1="403.19785787752795" x2="923.0519305133655" y2="399.22338792624123" stroke="#303030" stroke-width="1" />
<line x1="932.1681903941227" y1="403.4338453833313" x2="932.8350536707837" y2="399.4898254327934" stroke="#303030" stroke-width="1" />
<line x1="939.942505318072" y1="405.8310178371373" x2="941.6125060042749" y2="402.19631046128404" stroke="#303030" stroke-width="1" />
<line x1="948.4524180691878" y1="411.62157827314934" x2="951.2204720135992" y2="408.73403998581375" stroke="#303030" stroke-width="1" />
<line x1="953.3806829646717" y1="417.71934994180265" x2="956.7846420568874" y2="415.6186209020352" stroke="#303030" stroke-width="1" />
<line x1="956.6735542462569" y1="425.028925460434" x2="960.5023999554513" y2="423.87136745532865" stroke="#303030" stroke-width="1" />
<line x1="957.9909605703999" y1="433.2514260731787" x2="961.9897941923871" y2="433.1548358890728" stroke="#303030" stroke-width="1" />
<line x1="957.0961467488925" y1="441.4311473454056" x2="960.9795205229432" y2="442.39000506739336" stroke="#303030" stroke-width="1" />
<line x1="953.6070916727848" y1="449.9079436985433" x2="957.0402647918538" y2="451.96058159512955" stroke="#303030" stroke-width="1" />
<line x1="948.4805683831283" y1="456.3514022364984" x2="951.2522546261126" y2="459.23545413798206" stroke="#303030" stroke-width="1" />
<circle cx="927.8" cy="435" r="31.8" fill="#5c5c5c"/>
<circle cx="927" cy="434" r="31" fill="url(#kng)"/>
<circle cx="928.2" cy="435.6" r="16.2" fill="#6e6e6e"/>
<circle cx="927" cy="434" r="15.6" fill="url(#capg)"/>
<rect x="909" y="467" width="37" height="13" fill="#ffffff" />
<rect x="908.5" y="466.5" width="37.5" height="1" fill="#404040" />
<rect x="908.5" y="466.5" width="1" height="13.5" fill="#404040" />
<text x="911" y="477.5" font-size="10.5" fill="#262626" text-anchor="start" font-weight="normal" textLength="19" lengthAdjust="spacingAndGlyphs" >0.13</text>
<polygon points="907.3,438.4 912.2,448.8 902.4,448.8" fill="#e88020"/>
<polygon points="941.0,434.0 934.6,437.0 934.6,431.0" fill="#e88020"/>
<text x="1008" y="300.5" font-size="10.5" fill="#464646" text-anchor="middle" font-weight="normal" textLength="33" lengthAdjust="spacingAndGlyphs" >Position</text>
<rect x="988" y="301.8" width="43" height="86" fill="none" stroke="#e4e4e4" stroke-width="1" />
<rect x="989" y="303.3" width="41" height="83" fill="#c4c4c4" stroke="#1a1a1a" stroke-width="1.6" />
<rect x="996" y="304.8" width="26" height="80" fill="url(#drumg)" />
<rect x="1021" y="304.8" width="1.5" height="80" fill="#101010" />
<rect x="995.5" y="304.8" width="0.8" height="80" fill="#e8e8e8" />
<rect x="997" y="313.1" width="3" height="0.9" fill="#6a6a6a" />
<rect x="1018" y="313.1" width="3" height="0.9" fill="#6a6a6a" />
<rect x="997" y="317.2" width="3" height="0.9" fill="#6a6a6a" />
<rect x="1018" y="317.2" width="3" height="0.9" fill="#6a6a6a" />
<rect x="997" y="321.3" width="5" height="1" fill="#5a5a5a" />
<rect x="1016" y="321.3" width="5" height="1" fill="#5a5a5a" />
<rect x="997" y="325.40000000000003" width="3" height="0.9" fill="#6a6a6a" />
<rect x="1018" y="325.40000000000003" width="3" height="0.9" fill="#6a6a6a" />
<rect x="997" y="329.5" width="3" height="0.9" fill="#6a6a6a" />
<rect x="1018" y="329.5" width="3" height="0.9" fill="#6a6a6a" />
<rect x="997" y="333.6" width="3" height="0.9" fill="#6a6a6a" />
<rect x="1018" y="333.6" width="3" height="0.9" fill="#6a6a6a" />
<rect x="997" y="337.7" width="3" height="0.9" fill="#6a6a6a" />
<rect x="1018" y="337.7" width="3" height="0.9" fill="#6a6a6a" />
<rect x="997" y="341.8" width="5" height="1" fill="#5a5a5a" />
<rect x="1016" y="341.8" width="5" height="1" fill="#5a5a5a" />
<rect x="997" y="345.90000000000003" width="3" height="0.9" fill="#6a6a6a" />
<rect x="1018" y="345.90000000000003" width="3" height="0.9" fill="#6a6a6a" />
<rect x="997" y="350.0" width="3" height="0.9" fill="#6a6a6a" />
<rect x="1018" y="350.0" width="3" height="0.9" fill="#6a6a6a" />
<rect x="997" y="354.1" width="3" height="0.9" fill="#6a6a6a" />
<rect x="1018" y="354.1" width="3" height="0.9" fill="#6a6a6a" />
<rect x="997" y="358.2" width="3" height="0.9" fill="#6a6a6a" />
<rect x="1018" y="358.2" width="3" height="0.9" fill="#6a6a6a" />
<rect x="997" y="362.3" width="5" height="1" fill="#5a5a5a" />
<rect x="1016" y="362.3" width="5" height="1" fill="#5a5a5a" />
<rect x="997" y="366.40000000000003" width="3" height="0.9" fill="#6a6a6a" />
<rect x="1018" y="366.40000000000003" width="3" height="0.9" fill="#6a6a6a" />
<rect x="997" y="370.5" width="3" height="0.9" fill="#6a6a6a" />
<rect x="1018" y="370.5" width="3" height="0.9" fill="#6a6a6a" />
<text x="1009.5" y="324.70000000000005" font-size="10.5" fill="#303030" text-anchor="middle" font-weight="bold" textLength="14.5" lengthAdjust="spacingAndGlyphs" >-10</text>
<text x="1009.5" y="346.1" font-size="10.5" fill="#303030" text-anchor="middle" font-weight="bold" textLength="6.5" lengthAdjust="spacingAndGlyphs" >0</text>
<text x="1009.5" y="366.3" font-size="10.5" fill="#303030" text-anchor="middle" font-weight="bold" textLength="11" lengthAdjust="spacingAndGlyphs" >10</text>
<polygon points="989.5,336.8 996.5,342.3 989.5,347.8" fill="#d01818"/>
<polygon points="1029.5,336.8 1022,342.3 1029.5,347.8" fill="#d01818"/>
<g fill="#30a0e0" stroke="#30a0e0" opacity="1.0"><polygon points="983.5,330.3 979.0,337.3 988.0,337.3" stroke="none"/><polygon points="983.5,354.3 979.0,347.3 988.0,347.3" stroke="none"/><rect x="982.5" y="336.3" width="2" height="12" stroke="none"/></g>
<text x="1055" y="307" font-size="11" fill="#464646" text-anchor="end" font-weight="normal" textLength="13" lengthAdjust="spacingAndGlyphs" >AC</text>
<text x="1055" y="321.5" font-size="11" fill="#464646" text-anchor="end" font-weight="normal" textLength="13" lengthAdjust="spacingAndGlyphs" >DC</text>
<text x="1055" y="336" font-size="11" fill="#464646" text-anchor="end" font-weight="normal" textLength="20" lengthAdjust="spacingAndGlyphs" >GND</text>
<text x="1055" y="350.5" font-size="11" fill="#464646" text-anchor="end" font-weight="normal" textLength="18" lengthAdjust="spacingAndGlyphs" >OFF</text>
<rect x="1057.5" y="292.5" width="14" height="64.5" fill="#c0c0c0" stroke="#1a1a1a" stroke-width="1.2" />
<rect x="1058.5" y="293.5" width="12.5" height="63.5" fill="none" stroke="#e8e8e8" stroke-width="0.8" />
<rect x="1063.3" y="297.5" width="2.4" height="42.5" fill="#080808" />
<rect x="1059.0" y="340.5" width="11" height="15" fill="url(#hdlg)" stroke="#505050" stroke-width="0.8" />
<rect x="1060.5" y="343.5" width="8" height="0.9" fill="#505050" />
<rect x="1060.5" y="346.1" width="8" height="0.9" fill="#505050" />
<rect x="1060.5" y="348.7" width="8" height="0.9" fill="#505050" />
<rect x="1060.5" y="351.3" width="8" height="0.9" fill="#505050" />
<text x="1055" y="371" font-size="10.5" fill="#464646" text-anchor="end" font-weight="normal" textLength="23" lengthAdjust="spacingAndGlyphs" >Invert</text>
<rect x="1057.5" y="360.5" width="14" height="14" fill="url(#btng)" />
<rect x="1058.0" y="361.0" width="14" height="14" fill="none" stroke="#d8d8d8" stroke-width="0.8" />
<path d="M980.5,480.0 L980.5,434 A45.5,45.5 0 0 1 1071.5,434 L1071.5,480.0 Z" fill="#fbfbfb" stroke="#3a3a3a" stroke-width="1.2"/>
<line x1="1044.4698442597698" y1="410.35967739179836" x2="1054.6282586026432" y2="397.3574999572874" stroke="#4a4a4a" stroke-width="4" />
<line x1="1044.4698442597698" y1="410.35967739179836" x2="1054.6282586026432" y2="397.3574999572874" stroke="#c0c0c0" stroke-width="2" />
<rect x="1005.5" y="458" width="41" height="22.0" fill="#acabab" />
<rect x="1005" y="458" width="1" height="22.0" fill="#3a3a3a" />
<rect x="1046" y="458" width="1" height="22.0" fill="#3a3a3a" />
<text x="995.5" y="465.5" font-size="9" fill="#3a3a3a" text-anchor="middle" font-weight="normal" textLength="9.8" lengthAdjust="spacingAndGlyphs" >20</text>
<text x="987" y="453" font-size="9" fill="#3a3a3a" text-anchor="middle" font-weight="normal" textLength="9.8" lengthAdjust="spacingAndGlyphs" >10</text>
<text x="985.5" y="437.5" font-size="9" fill="#3a3a3a" text-anchor="middle" font-weight="normal" textLength="4.9" lengthAdjust="spacingAndGlyphs" >5</text>
<text x="988" y="423.2" font-size="9" fill="#3a3a3a" text-anchor="middle" font-weight="normal" textLength="4.9" lengthAdjust="spacingAndGlyphs" >2</text>
<text x="997" y="408.7" font-size="9" fill="#3a3a3a" text-anchor="middle" font-weight="normal" textLength="4.9" lengthAdjust="spacingAndGlyphs" >1</text>
<text x="1010.8" y="399.7" font-size="9" fill="#3a3a3a" text-anchor="middle" font-weight="normal" textLength="12.6" lengthAdjust="spacingAndGlyphs" >0.5</text>
<text x="1026" y="397" font-size="9" fill="#3a3a3a" text-anchor="middle" font-weight="normal" textLength="12.6" lengthAdjust="spacingAndGlyphs" >0.2</text>
<text x="1041.5" y="399.7" font-size="9" fill="#3a3a3a" text-anchor="middle" font-weight="normal" textLength="12.6" lengthAdjust="spacingAndGlyphs" >0.1</text>
<text x="1056" y="408.7" font-size="9" fill="#3a3a3a" text-anchor="middle" font-weight="normal" textLength="9.8" lengthAdjust="spacingAndGlyphs" >50</text>
<text x="1064" y="423.2" font-size="9" fill="#3a3a3a" text-anchor="middle" font-weight="normal" textLength="9.8" lengthAdjust="spacingAndGlyphs" >20</text>
<text x="1066.8" y="437.5" font-size="9" fill="#3a3a3a" text-anchor="middle" font-weight="normal" textLength="9.8" lengthAdjust="spacingAndGlyphs" >10</text>
<text x="1063" y="453" font-size="9" fill="#3a3a3a" text-anchor="middle" font-weight="normal" textLength="4.9" lengthAdjust="spacingAndGlyphs" >5</text>
<text x="1055" y="465.5" font-size="9" fill="#3a3a3a" text-anchor="middle" font-weight="normal" textLength="4.9" lengthAdjust="spacingAndGlyphs" >2</text>
<text x="992.5" y="477" font-size="11" fill="#404040" text-anchor="middle" font-weight="normal" >V</text>
<text x="1059.5" y="477" font-size="11" fill="#404040" text-anchor="middle" font-weight="normal" >mV</text>
<line x1="1003.3496383932128" y1="455.1650919932274" x2="1000.4270110891111" y2="457.89607160525674" stroke="#303030" stroke-width="1" />
<line x1="997.3197728303829" y1="445.7662470439455" x2="993.6190983568839" y2="447.2844724689707" stroke="#303030" stroke-width="1" />
<line x1="995.0023621747282" y1="434.38268688673173" x2="991.0026669714673" y2="434.4320658398584" stroke="#303030" stroke-width="1" />
<line x1="996.8619288603238" y1="423.4182794282229" x2="993.1021777455269" y2="422.05289612863874" stroke="#303030" stroke-width="1" />
<line x1="1003.8135578949981" y1="412.3490927044292" x2="1000.950791171772" y2="409.55542724693623" stroke="#303030" stroke-width="1" />
<line x1="1014.3013517717411" y1="405.2921329661806" x2="1012.7918487745465" y2="401.58789205859097" stroke="#303030" stroke-width="1" />
<line x1="1026.0" y1="403.0" x2="1026.0" y2="399.0" stroke="#303030" stroke-width="1" />
<line x1="1037.8958239729593" y1="405.37327521345895" x2="1039.4307690017283" y2="401.6795042732601" stroke="#303030" stroke-width="1" />
<line x1="1048.5499111298907" y1="412.72791716746974" x2="1051.4595770821347" y2="409.9831322858529" stroke="#303030" stroke-width="1" />
<line x1="1055.1380711396762" y1="423.4182794282229" x2="1058.897822254473" y2="422.05289612863874" stroke="#303030" stroke-width="1" />
<line x1="1056.997672431525" y1="434.37987343666083" x2="1060.9973721001088" y2="434.4288893639719" stroke="#303030" stroke-width="1" />
<line x1="1054.4535681147645" y1="446.3042456712495" x2="1058.124996258605" y2="447.89189027399135" stroke="#303030" stroke-width="1" />
<line x1="1048.1100857057093" y1="455.72887733147286" x2="1050.9629999903168" y2="458.5326034387596" stroke="#303030" stroke-width="1" />
<circle cx="1026.8" cy="435" r="31.8" fill="#5c5c5c"/>
<circle cx="1026" cy="434" r="31" fill="url(#kng)"/>
<circle cx="1027.2" cy="435.6" r="16.2" fill="#6e6e6e"/>
<circle cx="1026" cy="434" r="15.6" fill="url(#capg)"/>
<rect x="1008" y="467" width="37" height="13" fill="#ffffff" />
<rect x="1007.5" y="466.5" width="37.5" height="1" fill="#404040" />
<rect x="1007.5" y="466.5" width="1" height="13.5" fill="#404040" />
<text x="1010" y="477.5" font-size="10.5" fill="#262626" text-anchor="start" font-weight="normal" >5</text>
<polygon points="997.0,434.0 1007.4,429.1 1007.4,438.9" fill="#2090e0"/>
<polygon points="1035.9,443.9 1029.3,441.5 1033.5,437.3" fill="#2090e0"/>
<text x="1106" y="300.5" font-size="10.5" fill="#464646" text-anchor="middle" font-weight="normal" textLength="33" lengthAdjust="spacingAndGlyphs" >Position</text>
<rect x="1086" y="301.8" width="43" height="86" fill="none" stroke="#e4e4e4" stroke-width="1" />
<rect x="1087" y="303.3" width="41" height="83" fill="#c4c4c4" stroke="#1a1a1a" stroke-width="1.6" />
<rect x="1094" y="304.8" width="26" height="80" fill="url(#drumg)" />
<rect x="1119" y="304.8" width="1.5" height="80" fill="#101010" />
<rect x="1093.5" y="304.8" width="0.8" height="80" fill="#e8e8e8" />
<rect x="1095" y="313.1" width="3" height="0.9" fill="#6a6a6a" />
<rect x="1116" y="313.1" width="3" height="0.9" fill="#6a6a6a" />
<rect x="1095" y="317.2" width="3" height="0.9" fill="#6a6a6a" />
<rect x="1116" y="317.2" width="3" height="0.9" fill="#6a6a6a" />
<rect x="1095" y="321.3" width="5" height="1" fill="#5a5a5a" />
<rect x="1114" y="321.3" width="5" height="1" fill="#5a5a5a" />
<rect x="1095" y="325.40000000000003" width="3" height="0.9" fill="#6a6a6a" />
<rect x="1116" y="325.40000000000003" width="3" height="0.9" fill="#6a6a6a" />
<rect x="1095" y="329.5" width="3" height="0.9" fill="#6a6a6a" />
<rect x="1116" y="329.5" width="3" height="0.9" fill="#6a6a6a" />
<rect x="1095" y="333.6" width="3" height="0.9" fill="#6a6a6a" />
<rect x="1116" y="333.6" width="3" height="0.9" fill="#6a6a6a" />
<rect x="1095" y="337.7" width="3" height="0.9" fill="#6a6a6a" />
<rect x="1116" y="337.7" width="3" height="0.9" fill="#6a6a6a" />
<rect x="1095" y="341.8" width="5" height="1" fill="#5a5a5a" />
<rect x="1114" y="341.8" width="5" height="1" fill="#5a5a5a" />
<rect x="1095" y="345.90000000000003" width="3" height="0.9" fill="#6a6a6a" />
<rect x="1116" y="345.90000000000003" width="3" height="0.9" fill="#6a6a6a" />
<rect x="1095" y="350.0" width="3" height="0.9" fill="#6a6a6a" />
<rect x="1116" y="350.0" width="3" height="0.9" fill="#6a6a6a" />
<rect x="1095" y="354.1" width="3" height="0.9" fill="#6a6a6a" />
<rect x="1116" y="354.1" width="3" height="0.9" fill="#6a6a6a" />
<rect x="1095" y="358.2" width="3" height="0.9" fill="#6a6a6a" />
<rect x="1116" y="358.2" width="3" height="0.9" fill="#6a6a6a" />
<rect x="1095" y="362.3" width="5" height="1" fill="#5a5a5a" />
<rect x="1114" y="362.3" width="5" height="1" fill="#5a5a5a" />
<rect x="1095" y="366.40000000000003" width="3" height="0.9" fill="#6a6a6a" />
<rect x="1116" y="366.40000000000003" width="3" height="0.9" fill="#6a6a6a" />
<rect x="1095" y="370.5" width="3" height="0.9" fill="#6a6a6a" />
<rect x="1116" y="370.5" width="3" height="0.9" fill="#6a6a6a" />
<text x="1107.5" y="324.70000000000005" font-size="10.5" fill="#303030" text-anchor="middle" font-weight="bold" textLength="20" lengthAdjust="spacingAndGlyphs" >-130</text>
<text x="1107.5" y="346.1" font-size="10.5" fill="#303030" text-anchor="middle" font-weight="bold" textLength="20" lengthAdjust="spacingAndGlyphs" >-120</text>
<text x="1107.5" y="366.3" font-size="10.5" fill="#303030" text-anchor="middle" font-weight="bold" textLength="20" lengthAdjust="spacingAndGlyphs" >-110</text>
<polygon points="1087.5,336.8 1094.5,342.3 1087.5,347.8" fill="#d01818"/>
<polygon points="1127.5,336.8 1120,342.3 1127.5,347.8" fill="#d01818"/>
<g fill="#20a060" stroke="#20a060" opacity="1.0"><polygon points="1081.5,330.3 1077.0,337.3 1086.0,337.3" stroke="none"/><polygon points="1081.5,354.3 1077.0,347.3 1086.0,347.3" stroke="none"/><rect x="1080.5" y="336.3" width="2" height="12" stroke="none"/></g>
<text x="1153.5" y="307" font-size="11" fill="#464646" text-anchor="end" font-weight="normal" textLength="13" lengthAdjust="spacingAndGlyphs" >AC</text>
<text x="1153.5" y="321.5" font-size="11" fill="#464646" text-anchor="end" font-weight="normal" textLength="13" lengthAdjust="spacingAndGlyphs" >DC</text>
<text x="1153.5" y="336" font-size="11" fill="#464646" text-anchor="end" font-weight="normal" textLength="20" lengthAdjust="spacingAndGlyphs" >GND</text>
<text x="1153.5" y="350.5" font-size="11" fill="#464646" text-anchor="end" font-weight="normal" textLength="18" lengthAdjust="spacingAndGlyphs" >OFF</text>
<rect x="1156.5" y="292.5" width="14" height="64.5" fill="#c0c0c0" stroke="#1a1a1a" stroke-width="1.2" />
<rect x="1157.5" y="293.5" width="12.5" height="63.5" fill="none" stroke="#e8e8e8" stroke-width="0.8" />
<rect x="1162.3" y="297.5" width="2.4" height="42.5" fill="#080808" />
<rect x="1158.0" y="340.5" width="11" height="15" fill="url(#hdlg)" stroke="#505050" stroke-width="0.8" />
<rect x="1159.5" y="343.5" width="8" height="0.9" fill="#505050" />
<rect x="1159.5" y="346.1" width="8" height="0.9" fill="#505050" />
<rect x="1159.5" y="348.7" width="8" height="0.9" fill="#505050" />
<rect x="1159.5" y="351.3" width="8" height="0.9" fill="#505050" />
<text x="1153.5" y="371" font-size="10.5" fill="#464646" text-anchor="end" font-weight="normal" textLength="23" lengthAdjust="spacingAndGlyphs" >Invert</text>
<rect x="1156" y="360.5" width="14" height="14" fill="url(#btng)" />
<rect x="1156.5" y="361.0" width="14" height="14" fill="none" stroke="#d8d8d8" stroke-width="0.8" />
<path d="M1078.7,480.5 L1078.7,434.5 A45.5,45.5 0 0 1 1169.7,434.5 L1169.7,480.5 Z" fill="#fbfbfb" stroke="#3a3a3a" stroke-width="1.2"/>
<line x1="1142.66984425977" y1="410.85967739179836" x2="1152.8282586026432" y2="397.8574999572874" stroke="#4a4a4a" stroke-width="4" />
<line x1="1142.66984425977" y1="410.85967739179836" x2="1152.8282586026432" y2="397.8574999572874" stroke="#c0c0c0" stroke-width="2" />
<rect x="1103.7" y="458.5" width="41" height="22.0" fill="#acabab" />
<rect x="1103.2" y="458.5" width="1" height="22.0" fill="#3a3a3a" />
<rect x="1144.2" y="458.5" width="1" height="22.0" fill="#3a3a3a" />
<text x="1093.7" y="466.0" font-size="9" fill="#3a3a3a" text-anchor="middle" font-weight="normal" textLength="9.8" lengthAdjust="spacingAndGlyphs" >20</text>
<text x="1085.2" y="453.5" font-size="9" fill="#3a3a3a" text-anchor="middle" font-weight="normal" textLength="9.8" lengthAdjust="spacingAndGlyphs" >10</text>
<text x="1083.7" y="438.0" font-size="9" fill="#3a3a3a" text-anchor="middle" font-weight="normal" textLength="4.9" lengthAdjust="spacingAndGlyphs" >5</text>
<text x="1086.2" y="423.7" font-size="9" fill="#3a3a3a" text-anchor="middle" font-weight="normal" textLength="4.9" lengthAdjust="spacingAndGlyphs" >2</text>
<text x="1095.2" y="409.2" font-size="9" fill="#3a3a3a" text-anchor="middle" font-weight="normal" textLength="4.9" lengthAdjust="spacingAndGlyphs" >1</text>
<text x="1109.0" y="400.2" font-size="9" fill="#3a3a3a" text-anchor="middle" font-weight="normal" textLength="12.6" lengthAdjust="spacingAndGlyphs" >0.5</text>
<text x="1124.2" y="397.5" font-size="9" fill="#3a3a3a" text-anchor="middle" font-weight="normal" textLength="12.6" lengthAdjust="spacingAndGlyphs" >0.2</text>
<text x="1139.7" y="400.2" font-size="9" fill="#3a3a3a" text-anchor="middle" font-weight="normal" textLength="12.6" lengthAdjust="spacingAndGlyphs" >0.1</text>
<text x="1154.2" y="409.2" font-size="9" fill="#3a3a3a" text-anchor="middle" font-weight="normal" textLength="9.8" lengthAdjust="spacingAndGlyphs" >50</text>
<text x="1162.2" y="423.7" font-size="9" fill="#3a3a3a" text-anchor="middle" font-weight="normal" textLength="9.8" lengthAdjust="spacingAndGlyphs" >20</text>
<text x="1165.0" y="438.0" font-size="9" fill="#3a3a3a" text-anchor="middle" font-weight="normal" textLength="9.8" lengthAdjust="spacingAndGlyphs" >10</text>
<text x="1161.2" y="453.5" font-size="9" fill="#3a3a3a" text-anchor="middle" font-weight="normal" textLength="4.9" lengthAdjust="spacingAndGlyphs" >5</text>
<text x="1153.2" y="466.0" font-size="9" fill="#3a3a3a" text-anchor="middle" font-weight="normal" textLength="4.9" lengthAdjust="spacingAndGlyphs" >2</text>
<text x="1090.7" y="477.5" font-size="11" fill="#404040" text-anchor="middle" font-weight="normal" >V</text>
<text x="1157.7" y="477.5" font-size="11" fill="#404040" text-anchor="middle" font-weight="normal" >mV</text>
<line x1="1101.5496383932127" y1="455.6650919932274" x2="1098.6270110891112" y2="458.39607160525674" stroke="#303030" stroke-width="1" />
<line x1="1095.5197728303829" y1="446.2662470439455" x2="1091.8190983568838" y2="447.7844724689707" stroke="#303030" stroke-width="1" />
<line x1="1093.2023621747283" y1="434.88268688673173" x2="1089.2026669714674" y2="434.9320658398584" stroke="#303030" stroke-width="1" />
<line x1="1095.0619288603239" y1="423.9182794282229" x2="1091.302177745527" y2="422.55289612863874" stroke="#303030" stroke-width="1" />
<line x1="1102.0135578949983" y1="412.8490927044292" x2="1099.1507911717722" y2="410.05542724693623" stroke="#303030" stroke-width="1" />
<line x1="1112.5013517717412" y1="405.7921329661806" x2="1110.9918487745465" y2="402.08789205859097" stroke="#303030" stroke-width="1" />
<line x1="1124.2" y1="403.5" x2="1124.2" y2="399.5" stroke="#303030" stroke-width="1" />
<line x1="1136.0958239729594" y1="405.87327521345895" x2="1137.6307690017284" y2="402.1795042732601" stroke="#303030" stroke-width="1" />
<line x1="1146.7499111298907" y1="413.22791716746974" x2="1149.6595770821348" y2="410.4831322858529" stroke="#303030" stroke-width="1" />
<line x1="1153.3380711396762" y1="423.9182794282229" x2="1157.0978222544732" y2="422.55289612863874" stroke="#303030" stroke-width="1" />
<line x1="1155.197672431525" y1="434.87987343666083" x2="1159.1973721001089" y2="434.9288893639719" stroke="#303030" stroke-width="1" />
<line x1="1152.6535681147645" y1="446.8042456712495" x2="1156.324996258605" y2="448.39189027399135" stroke="#303030" stroke-width="1" />
<line x1="1146.3100857057093" y1="456.22887733147286" x2="1149.1629999903168" y2="459.0326034387596" stroke="#303030" stroke-width="1" />
<circle cx="1125.0" cy="435.5" r="31.8" fill="#5c5c5c"/>
<circle cx="1124.2" cy="434.5" r="31" fill="url(#kng)"/>
<circle cx="1125.4" cy="436.1" r="16.2" fill="#6e6e6e"/>
<circle cx="1124.2" cy="434.5" r="15.6" fill="url(#capg)"/>
<rect x="1106.2" y="467.5" width="37" height="13" fill="#ffffff" />
<rect x="1105.7" y="467.0" width="37.5" height="1" fill="#404040" />
<rect x="1105.7" y="467.0" width="1" height="13.5" fill="#404040" />
<text x="1108.2" y="478.0" font-size="10.5" fill="#262626" text-anchor="start" font-weight="normal" >5</text>
<polygon points="1095.2,434.5 1105.6,429.6 1105.6,439.4" fill="#20a060"/>
<polygon points="1134.1,444.4 1127.5,442.0 1131.7,437.8" fill="#20a060"/>
</g></svg></body></html>
